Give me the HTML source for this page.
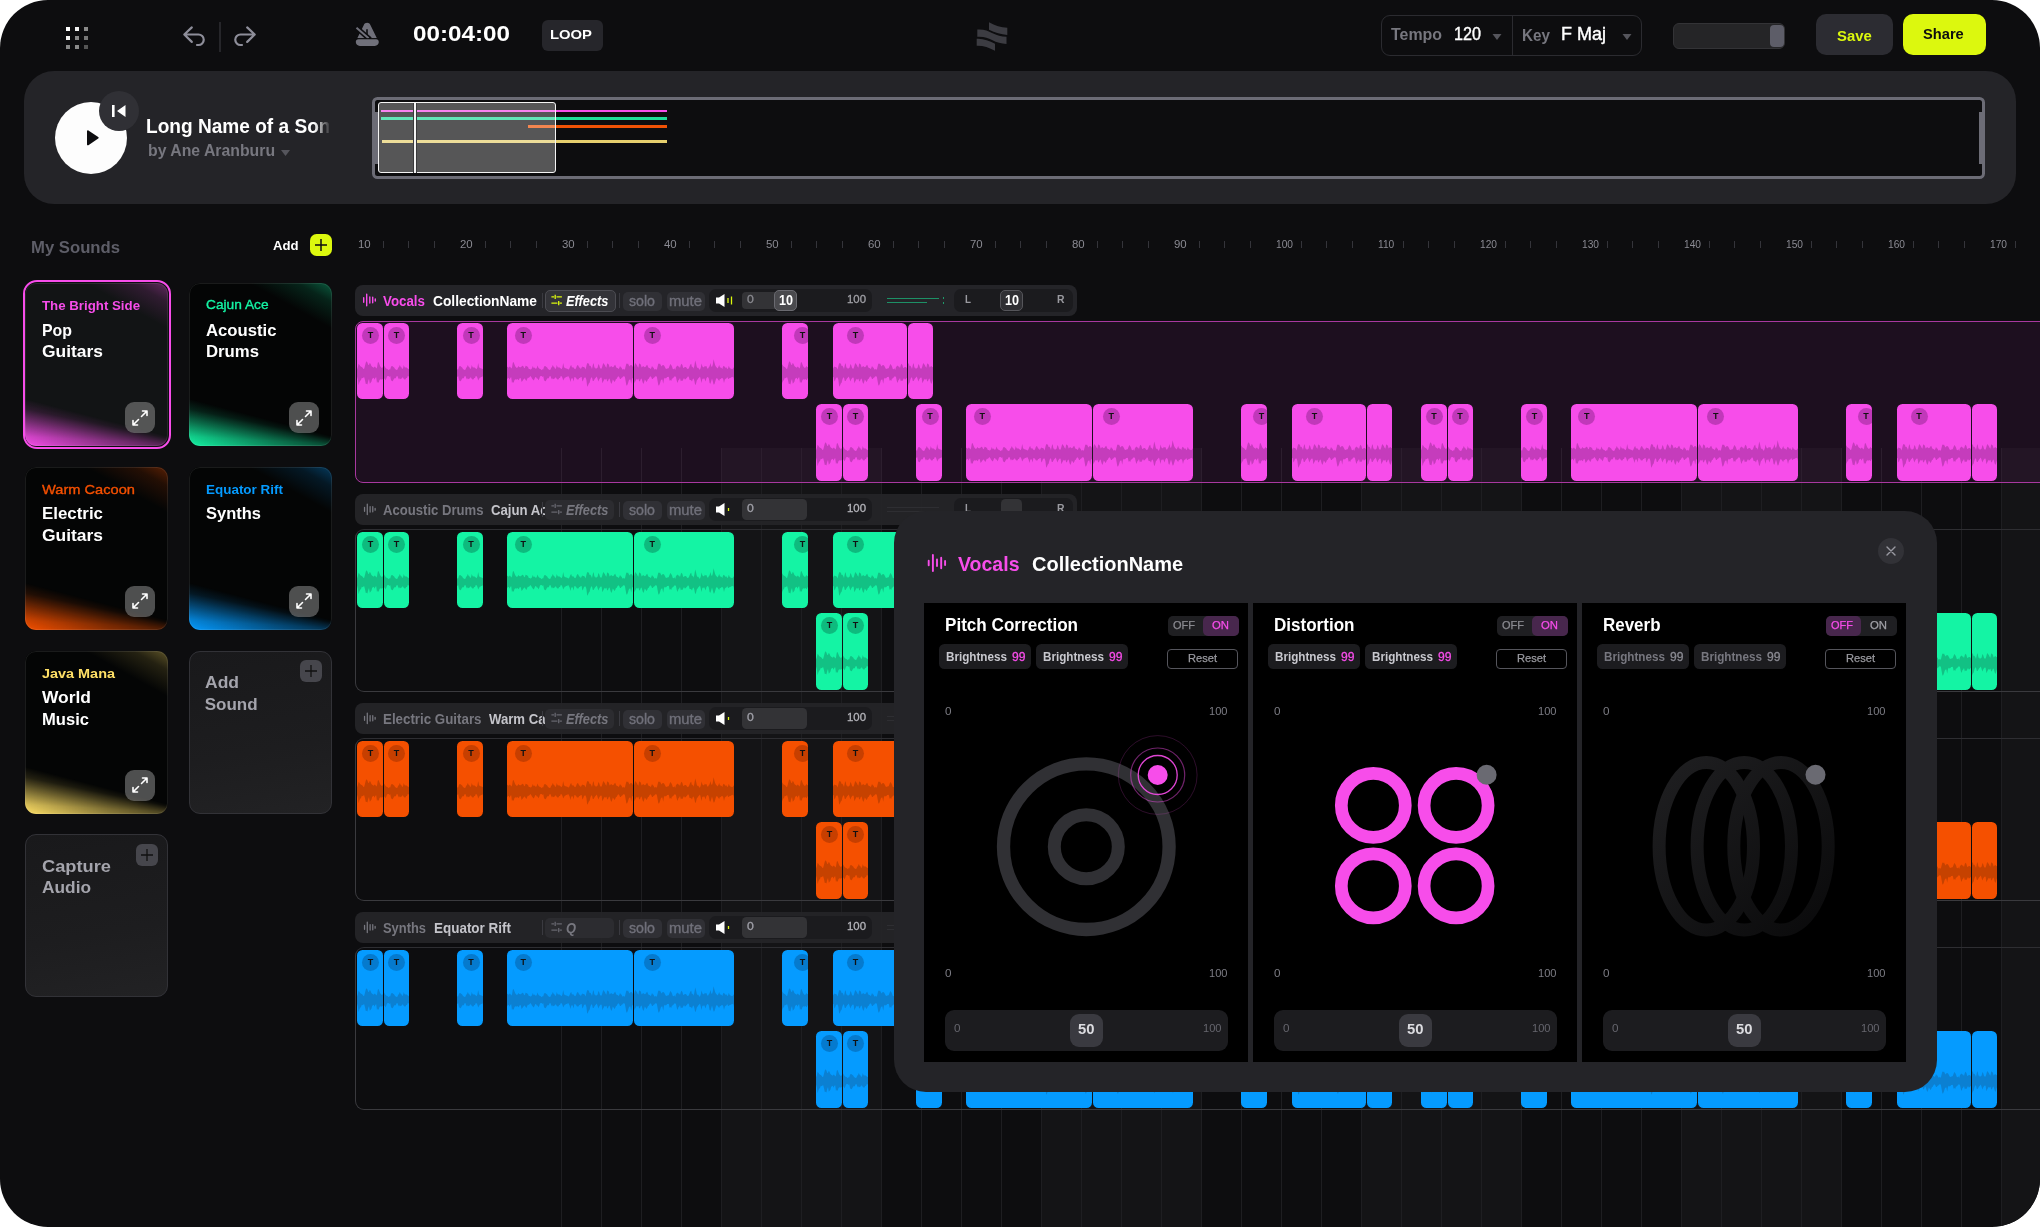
<!DOCTYPE html><html><head><meta charset="utf-8"><title>Studio</title><style>
*{margin:0;padding:0;box-sizing:border-box}
html,body{width:2040px;height:1227px;background:#fff;overflow:hidden}
body{font-family:"Liberation Sans",sans-serif;}
#app{position:absolute;left:0;top:0;width:2040px;height:1227px;background:#0d0d0f;border-radius:48px;overflow:hidden;will-change:transform}
.b{position:absolute}
.t{position:absolute;white-space:nowrap;line-height:1;transform-origin:0 50%}
.c{position:absolute;height:76.400px;border-radius:5.500px;overflow:hidden}
.w{position:absolute;left:0;top:30.200px;width:280px;height:40px}
.tb{position:absolute;top:4px;width:17px;height:17px;border-radius:50%;font-style:normal;font-weight:700;font-size:9px;line-height:17px;text-align:center;color:#111}
svg{position:absolute;overflow:visible}
</style></head><body><div id="app"><svg width="0" height="0" style="left:-10px"><defs><path id="wv" d="M0 0L0 -3.6L0.8 -5.8L1.6 -9.3L2.4 -8.3L3.2 -7.1L4 -6.3L4.8 -6.0L5.6 -5.3L6.4 -4.0L7.2 -4.2L8 -7.3L8.8 -10.6L9.6 -11.7L10.4 -10.4L11.2 -8.2L12 -8.0L12.8 -10.2L13.6 -9.0L14.4 -7.1L15.2 -6.2L16 -5.8L16.8 -5.2L17.6 -6.4L18.4 -5.9L19.2 -4.5L20 -5.5L20.8 -10.2L21.6 -11.0L22.4 -8.8L23.2 -6.8L24 -5.8L24.8 -4.9L25.6 -5.5L26.4 -7.1L27.2 -5.9L28 -5.8L28.8 -5.7L29.6 -6.6L30.4 -7.3L31.2 -6.9L32 -5.2L32.8 -4.7L33.6 -7.3L34.4 -7.1L35.2 -6.5L36 -6.0L36.8 -4.1L37.6 -4.0L38.4 -3.5L39.2 -3.7L40 -4.8L40.8 -7.1L41.6 -5.1L42.4 -5.5L43.2 -4.8L44 -4.0L44.8 -5.2L45.6 -7.4L46.4 -5.3L47.2 -4.5L48 -4.0L48.8 -3.8L49.6 -2.8L50.4 -3.8L51.2 -3.5L52 -6.2L52.8 -6.9L53.6 -6.7L54.4 -6.1L55.2 -5.4L56 -4.1L56.8 -3.4L57.6 -3.1L58.4 -3.3L59.2 -5.3L60 -6.0L60.8 -7.9L61.6 -6.2L62.4 -5.7L63.2 -4.0L64 -4.8L64.8 -7.9L65.6 -5.7L66.4 -5.5L67.2 -5.7L68 -5.1L68.8 -4.4L69.6 -3.7L70.4 -5.4L71.2 -9.9L72 -5.9L72.8 -5.1L73.6 -4.8L74.4 -4.5L75.2 -4.2L76 -3.7L76.8 -3.6L77.6 -4.9L78.4 -7.1L79.2 -8.1L80 -5.5L80.8 -5.7L81.6 -5.6L82.4 -4.3L83.2 -3.8L84 -4.8L84.8 -6.9L85.6 -8.1L86.4 -7.3L87.2 -5.2L88 -5.4L88.8 -3.8L89.6 -5.6L90.4 -6.6L91.2 -5.9L92 -6.0L92.8 -5.3L93.6 -3.4L94.4 -7.1L95.2 -9.9L96 -9.4L96.8 -9.4L97.6 -7.1L98.4 -7.3L99.2 -6.1L100 -3.9L100.8 -8.0L101.6 -10.0L102.4 -5.5L103.2 -5.2L104 -4.0L104.8 -4.9L105.6 -5.3L106.4 -9.0L107.2 -7.8L108 -5.3L108.8 -4.2L109.6 -4.4L110.4 -6.9L111.2 -10.1L112 -9.1L112.8 -8.1L113.6 -6.2L114.4 -5.3L115.2 -9.7L116 -9.1L116.8 -8.4L117.6 -5.5L118.4 -6.3L119.2 -6.9L120 -6.3L120.8 -5.8L121.6 -6.2L122.4 -7.4L123.2 -8.2L124 -6.3L124.8 -5.1L125.6 -5.1L126.4 -3.9L127.2 -4.8L128 -6.9L128.8 -5.7L129.6 -5.2L130.4 -3.6L131.2 -3.6L132 -4.2L132.8 -3.1L133.6 -6.6L134.4 -9.6L135.2 -9.0L136 -9.5L136.8 -7.7L137.6 -6.5L138.4 -7.7L139.2 -8.0L140 -7.6L140.8 -6.3L141.6 -4.5L142.4 -4.1L143.2 -4.6L144 -4.6L144.8 -4.9L145.6 -7.2L146.4 -9.1L147.2 -8.0L148 -6.6L148.8 -4.1L149.6 -3.7L150.4 -4.7L151.2 -3.1L152 -5.9L152.8 -6.7L153.6 -7.5L154.4 -6.5L155.2 -6.3L156 -5.1L156.8 -7.9L157.6 -9.3L158.4 -8.1L159.2 -5.0L160 -5.2L160.8 -5.9L161.6 -5.9L162.4 -5.4L163.2 -4.1L164 -4.3L164.8 -4.5L165.6 -6.7L166.4 -8.5L167.2 -9.2L168 -5.6L168.8 -6.6L169.6 -4.3L170.4 -7.5L171.2 -12.5L172 -9.8L172.8 -6.2L173.6 -4.9L174.4 -5.2L175.2 -3.5L176 -3.6L176.8 -5.6L177.6 -9.4L178.4 -6.5L179.2 -6.1L180 -5.5L180.8 -7.3L181.6 -6.5L182.4 -6.9L183.2 -4.7L184 -4.3L184.8 -5.8L185.6 -6.7L186.4 -9.9L187.2 -6.8L188 -6.1L188.8 -8.5L189.6 -13.7L190.4 -10.6L191.2 -7.7L192 -6.3L192.8 -5.4L193.6 -4.4L194.4 -6.0L195.2 -7.9L196 -5.4L196.8 -5.5L197.6 -5.1L198.4 -4.0L199.2 -7.3L200 -6.5L200.8 -6.4L201.6 -5.1L202.4 -5.8L203.2 -4.1L204 -4.6L204.8 -7.3L205.6 -5.3L206.4 -4.6L207.2 -4.3L208 -3.8L208.8 -4.2L209.6 -5.2L210.4 -6.8L211.2 -8.4L212 -7.1L212.8 -7.6L213.6 -4.6L214.4 -6.9L215.2 -13.9L216 -10.6L216.8 -7.6L217.6 -9.0L218.4 -6.4L219.2 -5.2L220 -4.3L220.8 -7.3L221.6 -8.7L222.4 -7.7L223.2 -5.5L224 -4.6L224.8 -4.2L225.6 -5.5L226.4 -5.9L227.2 -5.3L228 -5.3L228.8 -3.4L229.6 -3.4L230.4 -4.6L231.2 -5.6L232 -7.3L232.8 -7.1L233.6 -5.5L234.4 -4.5L235.2 -4.7L236 -4.2L236.8 -3.6L237.6 -3.8L238.4 -4.7L239.2 -7.9L240 -7.8L240.8 -6.3L241.6 -4.7L242.4 -4.7L243.2 -5.7L244 -6.5L244.8 -10.4L245.6 -7.3L246.4 -6.6L247.2 -6.3L248 -4.5L248.8 -8.0L249.6 -9.9L250.4 -5.5L251.2 -5.8L252 -4.2L252.8 -4.3L253.6 -4.8L254.4 -7.2L255.2 -5.7L256 -4.9L256.8 -3.9L257.6 -3.9L258.4 -2.8L259.2 -3.8L260 -6.5L260.8 -10.7L261.6 -9.4L262.4 -8.0L263.2 -7.5L264 -7.4L264.8 -4.8L265.6 -5.5L266.4 -5.6L267.2 -9.4L268 -11.1L268.8 -7.6L269.6 -6.6L270.4 -6.7L271.2 -10.6L272 -9.1L272.8 -6.9L273.6 -6.8L274.4 -5.2L275.2 -4.3L276 -4.1L276.8 -5.9L277.6 -7.4L278.4 -12.4L279.2 -8.1L279.2 0L279.2 9.2L278.4 11.5L277.6 9.8L276.8 6.1L276 3.4L275.2 4.6L274.4 5.2L273.6 6.4L272.8 6.9L272 7.9L271.2 8.7L270.4 7.2L269.6 6.8L268.8 6.8L268 8.3L267.2 10.8L266.4 9.1L265.6 4.6L264.8 6.7L264 6.2L263.2 7.2L262.4 7.6L261.6 13.3L260.8 11.9L260 6.1L259.2 3.5L258.4 2.9L257.6 3.7L256.8 5.1L256 4.9L255.2 6.7L254.4 6.5L253.6 4.1L252.8 4.5L252 3.7L251.2 5.1L250.4 6.5L249.6 9.3L248.8 5.7L248 5.6L247.2 5.8L246.4 7.7L245.6 7.7L244.8 8.9L244 7.1L243.2 4.5L242.4 4.6L241.6 5.5L240.8 6.2L240 7.5L239.2 8.0L238.4 6.9L237.6 4.3L236.8 3.8L236 3.2L235.2 4.6L234.4 5.2L233.6 4.9L232.8 6.9L232 7.9L231.2 6.6L230.4 4.6L229.6 3.5L228.8 4.4L228 5.2L227.2 5.3L226.4 6.5L225.6 4.6L224.8 3.5L224 4.9L223.2 5.3L222.4 6.1L221.6 10.2L220.8 7.2L220 4.5L219.2 5.5L218.4 8.1L217.6 8.8L216.8 8.6L216 9.4L215.2 13.4L214.4 9.1L213.6 4.2L212.8 7.7L212 6.1L211.2 8.2L210.4 9.9L209.6 4.7L208.8 3.7L208 4.3L207.2 4.2L206.4 5.1L205.6 5.0L204.8 5.9L204 5.7L203.2 4.1L202.4 5.5L201.6 5.8L200.8 6.8L200 10.1L199.2 6.3L198.4 4.9L197.6 5.0L196.8 6.3L196 5.7L195.2 7.9L194.4 7.0L193.6 5.7L192.8 5.1L192 6.0L191.2 8.8L190.4 11.2L189.6 11.5L188.8 8.2L188 5.4L187.2 8.3L186.4 10.7L185.6 9.9L184.8 5.5L184 4.1L183.2 4.3L182.4 5.2L181.6 8.4L180.8 6.5L180 4.9L179.2 6.3L178.4 5.4L177.6 9.9L176.8 6.7L176 3.6L175.2 4.5L174.4 5.3L173.6 6.4L172.8 7.6L172 10.7L171.2 12.2L170.4 8.1L169.6 5.6L168.8 6.0L168 8.4L167.2 7.3L166.4 7.1L165.6 7.0L164.8 4.0L164 3.3L163.2 4.6L162.4 5.2L161.6 6.2L160.8 6.4L160 5.0L159.2 6.4L158.4 8.1L157.6 7.4L156.8 8.2L156 5.1L155.2 6.5L154.4 7.3L153.6 9.9L152.8 7.9L152 4.2L151.2 3.2L150.4 3.4L149.6 4.6L148.8 5.4L148 5.5L147.2 7.9L146.4 7.1L145.6 7.7L144.8 3.7L144 4.1L143.2 3.9L142.4 4.9L141.6 5.6L140.8 4.7L140 5.9L139.2 10.8L138.4 6.4L137.6 6.4L136.8 7.6L136 10.2L135.2 12.2L134.4 12.4L133.6 7.9L132.8 3.5L132 3.4L131.2 3.2L130.4 4.4L129.6 4.7L128.8 6.0L128 6.0L127.2 4.1L126.4 3.2L125.6 4.0L124.8 5.7L124 6.0L123.2 7.9L122.4 9.0L121.6 7.6L120.8 6.6L120 9.4L119.2 11.0L118.4 8.4L117.6 5.4L116.8 6.1L116 8.1L115.2 8.4L114.4 5.6L113.6 6.8L112.8 5.8L112 7.0L111.2 8.5L110.4 10.3L109.6 4.7L108.8 4.5L108 5.3L107.2 6.4L106.4 8.4L105.6 6.0L104.8 3.5L104 4.5L103.2 5.3L102.4 6.5L101.6 8.1L100.8 8.0L100 4.5L99.2 4.4L98.4 6.5L97.6 9.8L96.8 10.6L96 12.5L95.2 13.7L94.4 6.9L93.6 4.5L92.8 4.4L92 4.9L91.2 7.3L90.4 8.4L89.6 4.0L88.8 4.1L88 5.0L87.2 5.0L86.4 6.5L85.6 6.5L84.8 6.3L84 4.7L83.2 4.3L82.4 4.1L81.6 8.5L80.8 5.7L80 4.9L79.2 6.1L78.4 9.0L77.6 5.5L76.8 4.0L76 2.8L75.2 4.3L74.4 3.8L73.6 4.5L72.8 4.8L72 5.9L71.2 7.4L70.4 4.7L69.6 3.3L68.8 3.1L68 5.1L67.2 5.1L66.4 6.4L65.6 6.4L64.8 6.0L64 4.5L63.2 4.5L62.4 5.8L61.6 6.2L60.8 5.3L60 6.5L59.2 4.9L58.4 3.1L57.6 3.2L56.8 4.9L56 5.5L55.2 5.2L54.4 7.1L53.6 8.2L52.8 8.1L52 7.1L51.2 2.9L50.4 3.9L49.6 3.0L48.8 3.1L48 3.5L47.2 6.1L46.4 7.2L45.6 5.6L44.8 5.4L44 4.1L43.2 4.2L42.4 6.3L41.6 7.5L40.8 6.6L40 5.6L39.2 3.9L38.4 3.1L37.6 3.9L36.8 5.0L36 4.5L35.2 6.1L34.4 8.1L33.6 6.9L32.8 5.5L32 5.8L31.2 7.0L30.4 7.9L29.6 8.9L28.8 5.6L28 4.7L27.2 6.2L26.4 7.3L25.6 5.9L24.8 6.6L24 6.6L23.2 6.2L22.4 7.3L21.6 10.0L20.8 8.5L20 10.3L19.2 4.2L18.4 4.8L17.6 6.7L16.8 4.7L16 5.2L15.2 5.8L14.4 8.8L13.6 9.8L12.8 10.8L12 6.1L11.2 8.1L10.4 11.5L9.6 10.7L8.8 11.0L8 7.2L7.2 4.3L6.4 4.5L5.6 5.2L4.8 4.8L4 6.9L3.2 7.8L2.4 9.2L1.6 12.3L0.8 6.3L0 3.5Z"/></defs></svg><div class="b" style="left:721.0px;top:448.0px;width:40.0px;height:800.0px;background:#141416;"></div><div class="b" style="left:761.0px;top:448.0px;width:40.0px;height:800.0px;background:#141416;"></div><div class="b" style="left:801.0px;top:448.0px;width:40.0px;height:800.0px;background:#141416;"></div><div class="b" style="left:841.0px;top:448.0px;width:40.0px;height:800.0px;background:#141416;"></div><div class="b" style="left:1041.0px;top:448.0px;width:40.0px;height:800.0px;background:#141416;"></div><div class="b" style="left:1081.0px;top:448.0px;width:40.0px;height:800.0px;background:#141416;"></div><div class="b" style="left:1121.0px;top:448.0px;width:40.0px;height:800.0px;background:#141416;"></div><div class="b" style="left:1161.0px;top:448.0px;width:40.0px;height:800.0px;background:#141416;"></div><div class="b" style="left:1361.0px;top:448.0px;width:40.0px;height:800.0px;background:#141416;"></div><div class="b" style="left:1401.0px;top:448.0px;width:40.0px;height:800.0px;background:#141416;"></div><div class="b" style="left:1441.0px;top:448.0px;width:40.0px;height:800.0px;background:#141416;"></div><div class="b" style="left:1481.0px;top:448.0px;width:40.0px;height:800.0px;background:#141416;"></div><div class="b" style="left:1681.0px;top:448.0px;width:40.0px;height:800.0px;background:#141416;"></div><div class="b" style="left:1721.0px;top:448.0px;width:40.0px;height:800.0px;background:#141416;"></div><div class="b" style="left:1761.0px;top:448.0px;width:40.0px;height:800.0px;background:#141416;"></div><div class="b" style="left:1801.0px;top:448.0px;width:40.0px;height:800.0px;background:#141416;"></div><div class="b" style="left:2001.0px;top:448.0px;width:40.0px;height:800.0px;background:#141416;"></div><div class="b" style="left:2041.0px;top:448.0px;width:40.0px;height:800.0px;background:#141416;"></div><div class="b" style="left:561.0px;top:448.0px;width:1.0px;height:800.0px;background:#1e1e21;"></div><div class="b" style="left:601.0px;top:448.0px;width:1.0px;height:800.0px;background:#1e1e21;"></div><div class="b" style="left:641.0px;top:448.0px;width:1.0px;height:800.0px;background:#1e1e21;"></div><div class="b" style="left:681.0px;top:448.0px;width:1.0px;height:800.0px;background:#1e1e21;"></div><div class="b" style="left:721.0px;top:448.0px;width:1.0px;height:800.0px;background:#1e1e21;"></div><div class="b" style="left:761.0px;top:448.0px;width:1.0px;height:800.0px;background:#1e1e21;"></div><div class="b" style="left:801.0px;top:448.0px;width:1.0px;height:800.0px;background:#1e1e21;"></div><div class="b" style="left:841.0px;top:448.0px;width:1.0px;height:800.0px;background:#1e1e21;"></div><div class="b" style="left:881.0px;top:448.0px;width:1.0px;height:800.0px;background:#1e1e21;"></div><div class="b" style="left:921.0px;top:448.0px;width:1.0px;height:800.0px;background:#1e1e21;"></div><div class="b" style="left:961.0px;top:448.0px;width:1.0px;height:800.0px;background:#1e1e21;"></div><div class="b" style="left:1001.0px;top:448.0px;width:1.0px;height:800.0px;background:#1e1e21;"></div><div class="b" style="left:1041.0px;top:448.0px;width:1.0px;height:800.0px;background:#1e1e21;"></div><div class="b" style="left:1081.0px;top:448.0px;width:1.0px;height:800.0px;background:#1e1e21;"></div><div class="b" style="left:1121.0px;top:448.0px;width:1.0px;height:800.0px;background:#1e1e21;"></div><div class="b" style="left:1161.0px;top:448.0px;width:1.0px;height:800.0px;background:#1e1e21;"></div><div class="b" style="left:1201.0px;top:448.0px;width:1.0px;height:800.0px;background:#1e1e21;"></div><div class="b" style="left:1241.0px;top:448.0px;width:1.0px;height:800.0px;background:#1e1e21;"></div><div class="b" style="left:1281.0px;top:448.0px;width:1.0px;height:800.0px;background:#1e1e21;"></div><div class="b" style="left:1321.0px;top:448.0px;width:1.0px;height:800.0px;background:#1e1e21;"></div><div class="b" style="left:1361.0px;top:448.0px;width:1.0px;height:800.0px;background:#1e1e21;"></div><div class="b" style="left:1401.0px;top:448.0px;width:1.0px;height:800.0px;background:#1e1e21;"></div><div class="b" style="left:1441.0px;top:448.0px;width:1.0px;height:800.0px;background:#1e1e21;"></div><div class="b" style="left:1481.0px;top:448.0px;width:1.0px;height:800.0px;background:#1e1e21;"></div><div class="b" style="left:1521.0px;top:448.0px;width:1.0px;height:800.0px;background:#1e1e21;"></div><div class="b" style="left:1561.0px;top:448.0px;width:1.0px;height:800.0px;background:#1e1e21;"></div><div class="b" style="left:1601.0px;top:448.0px;width:1.0px;height:800.0px;background:#1e1e21;"></div><div class="b" style="left:1641.0px;top:448.0px;width:1.0px;height:800.0px;background:#1e1e21;"></div><div class="b" style="left:1681.0px;top:448.0px;width:1.0px;height:800.0px;background:#1e1e21;"></div><div class="b" style="left:1721.0px;top:448.0px;width:1.0px;height:800.0px;background:#1e1e21;"></div><div class="b" style="left:1761.0px;top:448.0px;width:1.0px;height:800.0px;background:#1e1e21;"></div><div class="b" style="left:1801.0px;top:448.0px;width:1.0px;height:800.0px;background:#1e1e21;"></div><div class="b" style="left:1841.0px;top:448.0px;width:1.0px;height:800.0px;background:#1e1e21;"></div><div class="b" style="left:1881.0px;top:448.0px;width:1.0px;height:800.0px;background:#1e1e21;"></div><div class="b" style="left:1921.0px;top:448.0px;width:1.0px;height:800.0px;background:#1e1e21;"></div><div class="b" style="left:1961.0px;top:448.0px;width:1.0px;height:800.0px;background:#1e1e21;"></div><div class="b" style="left:2001.0px;top:448.0px;width:1.0px;height:800.0px;background:#1e1e21;"></div><div class="b" style="left:2041.0px;top:448.0px;width:1.0px;height:800.0px;background:#1e1e21;"></div><div class="b" style="left:66.0px;top:26.8px;width:4.0px;height:4.0px;background:#fff;"></div><div class="b" style="left:75.0px;top:26.8px;width:4.0px;height:4.0px;background:#f2f2f2;"></div><div class="b" style="left:84.0px;top:26.8px;width:4.0px;height:4.0px;background:#8a8a8a;"></div><div class="b" style="left:66.0px;top:35.8px;width:4.0px;height:4.0px;background:#f2f2f2;"></div><div class="b" style="left:75.0px;top:35.8px;width:4.0px;height:4.0px;background:#8a8a8a;"></div><div class="b" style="left:84.0px;top:35.8px;width:4.0px;height:4.0px;background:#777;"></div><div class="b" style="left:66.0px;top:44.8px;width:4.0px;height:4.0px;background:#8a8a8a;"></div><div class="b" style="left:75.0px;top:44.8px;width:4.0px;height:4.0px;background:#8a8a8a;"></div><div class="b" style="left:84.0px;top:44.8px;width:4.0px;height:4.0px;background:#555;"></div><svg style="left:180px;top:22px" width="80" height="30" viewBox="180 22 80 30" fill="none" stroke="#8e8e9a" stroke-width="2.200" stroke-linecap="round" stroke-linejoin="round"><path d="M191.800 27.400L184.300 34.500l7.500 7.400M184.800 34.500H198.500a5.250 5.250 0 0 1 0 10.500h-1.500"/><path d="M247.200 27.400L254.700 34.500l-7.500 7.400M254.200 34.500H240.500a5.250 5.250 0 0 0 0 10.500h1.500"/></svg><div class="b" style="left:219.0px;top:21.5px;width:2.0px;height:30.5px;background:#26262a;"></div><svg style="left:350px;top:18px" width="36" height="32" viewBox="350 18 36 32"><path fill="#70707a" d="M357.300 38.200L363.700 25.200C365 22 369.200 22 370.500 25.200L376.900 38.200Z"/><path stroke="#0d0d0f" stroke-width="1.600" d="M367 29.300V36"/><path stroke="#0d0d0f" stroke-width="5" d="M355 26.300L370 39.500"/><path stroke="#70707a" stroke-width="2" d="M356.500 27.700L368.600 38.300"/><path fill="#0d0d0f" d="M354 38.200h26v3h-26z"/><path fill="#70707a" d="M358.500 39.200h17.600c1.800 0 2.700 1.200 2.700 2.800 0 2.200-1.800 3.900-4 3.900h-15c-2.200 0-4-1.700-4-3.900 0-1.600 .9-2.800 2.700-2.800z"/></svg><span class="t" style="left:413.0px;top:23.3px;font-size:22.5px;color:#fff;transform:scaleX(1.077);font-weight:700;">00:04:00</span><div class="b" style="left:542.0px;top:20.0px;width:61.0px;height:30.5px;background:#26262b;border-radius:6px;"></div><span class="t" style="left:550.0px;top:29.4px;font-size:12.5px;color:#fff;transform:scaleX(1.186);font-weight:700;">LOOP</span><svg style="left:970px;top:18px" width="44" height="36" viewBox="970 18 44 36" fill="#3c3c42"><path d="M989 22.200C995 25.500 1001 27.500 1007.300 27.800V34.900C1001 34.500 995 32.500 989 29.800Z"/><path d="M977.300 29.500C984 29 988 31 992 33C997 35.500 1001 36.500 1006.500 36.800V44C1001 43.700 997 42.500 992 40C988 38 984 36.300 977.300 36.700Z"/><path d="M976.700 38.700C983 38.300 989 40.500 995 43.800V50.700C989 47.500 983 45.500 976.700 45.700Z"/></svg><div class="b" style="left:1381.0px;top:15.0px;width:261.0px;height:41.0px;border-radius:9px;border:1px solid #2b2b30;"></div><div class="b" style="left:1511.5px;top:15.0px;width:1.0px;height:41.0px;background:#2b2b30;"></div><span class="t" style="left:1391.0px;top:26.0px;font-size:16.5px;color:#77777f;transform:scaleX(0.965);font-weight:700;">Tempo</span><span class="t" style="left:1454.0px;top:26.4px;font-size:17.8px;color:#fff;transform:scaleX(0.910);-webkit-text-stroke:0.400px #fff;">120</span><span class="t" style="left:1522.0px;top:27.0px;font-size:16.5px;color:#77777f;transform:scaleX(0.925);font-weight:700;">Key</span><span class="t" style="left:1561.0px;top:26.4px;font-size:17.8px;color:#fff;transform:scaleX(1.012);-webkit-text-stroke:0.400px #fff;">F Maj</span><svg style="left:1492px;top:33.800px" width="10" height="6" viewBox="0 0 10 6"><path fill="#55555c" d="M0.500 0h9L5 6z"/></svg><svg style="left:1622px;top:33.800px" width="10" height="6" viewBox="0 0 10 6"><path fill="#55555c" d="M0.500 0h9L5 6z"/></svg><div class="b" style="left:1672.5px;top:23.0px;width:112.5px;height:25.5px;background:#252527;border-radius:6px;border:1px solid #333336;"></div><div class="b" style="left:1769.5px;top:25.0px;width:14.0px;height:21.5px;background:#5d5d68;border-radius:4px;"></div><div class="b" style="left:1815.5px;top:14.0px;width:77.0px;height:41.0px;background:#2c2c32;border-radius:10px;"></div><span class="t" style="left:1836.7px;top:27.7px;font-size:15px;color:#dcf80e;transform:scaleX(0.990);font-weight:700;">Save</span><div class="b" style="left:1902.5px;top:14.0px;width:83.0px;height:41.0px;background:#dcf80e;border-radius:10px;"></div><span class="t" style="left:1923.3px;top:25.5px;font-size:15px;color:#0d0d0f;transform:scaleX(0.978);font-weight:700;">Share</span><div class="b" style="left:24.0px;top:71.0px;width:1992.0px;height:133.0px;background:#242428;border-radius:30px;"></div><div class="b" style="left:54.5px;top:101.5px;width:72.0px;height:72.0px;background:#fdfdfd;border-radius:36px;"></div><svg style="left:86px;top:129.500px" width="13" height="16" viewBox="0 0 13 16"><path fill="#0d0d0f" d="M1 1.200c0-.8.700-1.200 1.400-.8l9.800 6.600c.6.400.6 1.200 0 1.600l-9.800 6.600c-.7.400-1.400 0-1.400-.8z"/></svg><div class="b" style="left:98.5px;top:90.5px;width:40.5px;height:40.5px;background:#303035;border-radius:21px;"></div><svg style="left:112px;top:105px" width="14" height="12" viewBox="0 0 14 12"><path fill="#fff" d="M0 0h2.600v12H0zM13.500 0v12L5 6z"/></svg><div class="b" style="left:146px;top:110px;width:183px;height:34px;overflow:hidden;-webkit-mask-image:linear-gradient(90deg,#000 92%,transparent 101%);mask-image:linear-gradient(90deg,#000 92%,transparent 101%)"><span class="t" style="left:0.1px;top:6.1px;font-size:20px;color:#fff;transform:scaleX(0.954);font-weight:700;">Long Name of a Song</span></div><span class="t" style="left:147.5px;top:142.0px;font-size:16.5px;color:#77777f;transform:scaleX(0.958);font-weight:700;">by Ane Aranburu</span><svg style="left:280.500px;top:149.500px" width="9" height="6" viewBox="0 0 9 6"><path fill="#55555c" d="M0 0h9L4.500 6z"/></svg><div class="b" style="left:372.0px;top:96.5px;width:1613.3px;height:82.3px;background:#0d0d0f;border-radius:5.5px;border:3px solid #6c6c76;"></div><div class="b" style="left:1979.0px;top:112.0px;width:3.3px;height:52.0px;background:#6c6c76;"></div><div class="b" style="left:374.5px;top:112.0px;width:3.0px;height:52.0px;background:#6c6c76;"></div><div class="b" style="left:381.2px;top:109.5px;width:286.0px;height:2.7px;background:#f74dea;"></div><div class="b" style="left:381.2px;top:117.2px;width:286.0px;height:2.7px;background:#1fdc9a;"></div><div class="b" style="left:528.0px;top:125.2px;width:139.2px;height:2.7px;background:#ee5205;"></div><div class="b" style="left:382.2px;top:140.2px;width:285.0px;height:2.7px;background:#e6cf6e;"></div><div class="b" style="left:377.5px;top:101.7px;width:178.5px;height:71.7px;background:rgba(255,255,255,0.30);border-radius:3px;border:1.200px solid #f4f4f4;"></div><div class="b" style="left:413.4px;top:102.5px;width:3.3px;height:70.0px;background:#3a3a3c;"></div><div class="b" style="left:414.4px;top:102.5px;width:1.3px;height:70.0px;background:#f4f4f4;"></div><span class="t" style="left:30.7px;top:238.5px;font-size:17px;color:#5e5e68;transform:scaleX(0.982);font-weight:700;">My Sounds</span><span class="t" style="left:272.5px;top:239.0px;font-size:13.2px;color:#fff;transform:scaleX(0.995);font-weight:700;">Add</span><div class="b" style="left:309.9px;top:234.3px;width:21.8px;height:21.8px;background:#dcf80e;border-radius:6.5px;"></div><svg style="left:314.750px;top:239.250px" width="12" height="12" viewBox="0 0 12 12"><path stroke="#0d0d0f" stroke-width="1.500" d="M6 0v12M0 6h12"/></svg><div class="b" style="left:22.9px;top:280.1px;width:148.0px;height:168.7px;border-radius:14px;border:2px solid #f74dea;"></div><div class="b" style="left:25.4px;top:282.8px;width:143.0px;height:163.0px;border-radius:11px;background:linear-gradient(29deg,transparent 81%,rgba(247,77,234,0.13) 92%,rgba(247,77,234,0.36) 100%),#121415;overflow:hidden;"><div class="b" style="inset:0;background:conic-gradient(from 270deg at 127% 100%,rgba(247,77,234,1.00) 0deg,rgba(247,77,234,0.85) 3deg,rgba(247,77,234,0.42) 8deg,rgba(247,77,234,0.13) 11.500deg,transparent 14.700deg,transparent 360deg);-webkit-mask-image:linear-gradient(90deg,#000 0%,rgba(0,0,0,.55) 60%,rgba(0,0,0,.3) 100%);mask-image:linear-gradient(90deg,#000 0%,rgba(0,0,0,.55) 60%,rgba(0,0,0,.3) 100%)"></div><div class="b" style="inset:0;border-radius:11px;border:1px solid rgba(255,255,255,0.09)"></div></div><span class="t" style="left:41.9px;top:299.2px;font-size:13.2px;color:#f74dea;transform:scaleX(1.006);font-weight:700;">The Bright Side</span><span class="t" style="left:41.9px;top:321.5px;font-size:17px;color:#fff;transform:scaleX(0.934);font-weight:700;">Pop</span><span class="t" style="left:41.9px;top:343.4px;font-size:17px;color:#fff;transform:scaleX(1.025);font-weight:700;">Guitars</span><div class="b" style="left:124.9px;top:402.3px;width:30.5px;height:30.5px;background:rgba(128,128,128,0.6);border-radius:9px;"></div><svg style="left:132.1px;top:409.5px" width="16" height="16" viewBox="0 0 16 16" fill="none" stroke="#fff" stroke-width="1.600" stroke-linecap="round" stroke-linejoin="round"><path d="M9.500 6.500L15 1M10.500 1H15v4.500M6.500 9.500L1 15M1 10.500V15h4.500"/></svg><div class="b" style="left:189.0px;top:282.8px;width:143.0px;height:163.0px;border-radius:11px;background:linear-gradient(29deg,transparent 81%,rgba(20,244,164,0.13) 92%,rgba(20,244,164,0.36) 100%),#040505;overflow:hidden;"><div class="b" style="inset:0;background:conic-gradient(from 270deg at 127% 100%,rgba(20,244,164,1.00) 0deg,rgba(20,244,164,0.85) 3deg,rgba(20,244,164,0.42) 8deg,rgba(20,244,164,0.13) 11.500deg,transparent 14.700deg,transparent 360deg);-webkit-mask-image:linear-gradient(90deg,#000 0%,rgba(0,0,0,.55) 60%,rgba(0,0,0,.3) 100%);mask-image:linear-gradient(90deg,#000 0%,rgba(0,0,0,.55) 60%,rgba(0,0,0,.3) 100%)"></div><div class="b" style="inset:0;border-radius:11px;border:1px solid rgba(255,255,255,0.09)"></div></div><span class="t" style="left:205.5px;top:297.7px;font-size:13.2px;color:#14f4a4;transform:scaleX(1.040);-webkit-text-stroke:0.350px #14f4a4;">Cajun Ace</span><span class="t" style="left:205.5px;top:321.5px;font-size:17px;color:#fff;transform:scaleX(0.982);font-weight:700;">Acoustic</span><span class="t" style="left:205.5px;top:343.4px;font-size:17px;color:#fff;transform:scaleX(0.984);font-weight:700;">Drums</span><div class="b" style="left:288.5px;top:402.3px;width:30.5px;height:30.5px;background:rgba(128,128,128,0.6);border-radius:9px;"></div><svg style="left:295.7px;top:409.5px" width="16" height="16" viewBox="0 0 16 16" fill="none" stroke="#fff" stroke-width="1.600" stroke-linecap="round" stroke-linejoin="round"><path d="M9.500 6.500L15 1M10.500 1H15v4.500M6.500 9.500L1 15M1 10.500V15h4.500"/></svg><div class="b" style="left:25.4px;top:466.7px;width:143.0px;height:163.0px;border-radius:11px;background:linear-gradient(29deg,transparent 81%,rgba(245,80,0,0.13) 92%,rgba(245,80,0,0.36) 100%),#040505;overflow:hidden;"><div class="b" style="inset:0;background:conic-gradient(from 270deg at 127% 100%,rgba(245,80,0,1.00) 0deg,rgba(245,80,0,0.85) 3deg,rgba(245,80,0,0.42) 8deg,rgba(245,80,0,0.13) 11.500deg,transparent 14.700deg,transparent 360deg);-webkit-mask-image:linear-gradient(90deg,#000 0%,rgba(0,0,0,.55) 60%,rgba(0,0,0,.3) 100%);mask-image:linear-gradient(90deg,#000 0%,rgba(0,0,0,.55) 60%,rgba(0,0,0,.3) 100%)"></div><div class="b" style="inset:0;border-radius:11px;border:1px solid rgba(255,255,255,0.09)"></div></div><span class="t" style="left:41.9px;top:483.1px;font-size:13.2px;color:#f55000;transform:scaleX(1.110);-webkit-text-stroke:0.350px #f55000;">Warm Cacoon</span><span class="t" style="left:41.9px;top:505.4px;font-size:17px;color:#fff;transform:scaleX(0.993);font-weight:700;">Electric</span><span class="t" style="left:41.9px;top:527.3px;font-size:17px;color:#fff;transform:scaleX(1.025);font-weight:700;">Guitars</span><div class="b" style="left:124.9px;top:586.2px;width:30.5px;height:30.5px;background:rgba(128,128,128,0.6);border-radius:9px;"></div><svg style="left:132.1px;top:593.4px" width="16" height="16" viewBox="0 0 16 16" fill="none" stroke="#fff" stroke-width="1.600" stroke-linecap="round" stroke-linejoin="round"><path d="M9.500 6.500L15 1M10.500 1H15v4.500M6.500 9.500L1 15M1 10.500V15h4.500"/></svg><div class="b" style="left:189.0px;top:466.7px;width:143.0px;height:163.0px;border-radius:11px;background:linear-gradient(29deg,transparent 81%,rgba(5,155,255,0.13) 92%,rgba(5,155,255,0.36) 100%),#040505;overflow:hidden;"><div class="b" style="inset:0;background:conic-gradient(from 270deg at 127% 100%,rgba(5,155,255,1.00) 0deg,rgba(5,155,255,0.85) 3deg,rgba(5,155,255,0.42) 8deg,rgba(5,155,255,0.13) 11.500deg,transparent 14.700deg,transparent 360deg);-webkit-mask-image:linear-gradient(90deg,#000 0%,rgba(0,0,0,.55) 60%,rgba(0,0,0,.3) 100%);mask-image:linear-gradient(90deg,#000 0%,rgba(0,0,0,.55) 60%,rgba(0,0,0,.3) 100%)"></div><div class="b" style="inset:0;border-radius:11px;border:1px solid rgba(255,255,255,0.09)"></div></div><span class="t" style="left:205.5px;top:483.1px;font-size:13.2px;color:#059bff;transform:scaleX(1.020);font-weight:700;">Equator Rift</span><span class="t" style="left:205.5px;top:505.4px;font-size:17px;color:#fff;transform:scaleX(0.970);font-weight:700;">Synths</span><div class="b" style="left:288.5px;top:586.2px;width:30.5px;height:30.5px;background:rgba(128,128,128,0.6);border-radius:9px;"></div><svg style="left:295.7px;top:593.4px" width="16" height="16" viewBox="0 0 16 16" fill="none" stroke="#fff" stroke-width="1.600" stroke-linecap="round" stroke-linejoin="round"><path d="M9.500 6.500L15 1M10.500 1H15v4.500M6.500 9.500L1 15M1 10.500V15h4.500"/></svg><div class="b" style="left:25.4px;top:650.5px;width:143.0px;height:163.0px;border-radius:11px;background:linear-gradient(29deg,transparent 81%,rgba(255,224,102,0.13) 92%,rgba(255,224,102,0.36) 100%),#040505;overflow:hidden;"><div class="b" style="inset:0;background:conic-gradient(from 270deg at 127% 100%,rgba(255,224,102,1.00) 0deg,rgba(255,224,102,0.85) 3deg,rgba(255,224,102,0.42) 8deg,rgba(255,224,102,0.13) 11.500deg,transparent 14.700deg,transparent 360deg);-webkit-mask-image:linear-gradient(90deg,#000 0%,rgba(0,0,0,.55) 60%,rgba(0,0,0,.3) 100%);mask-image:linear-gradient(90deg,#000 0%,rgba(0,0,0,.55) 60%,rgba(0,0,0,.3) 100%)"></div><div class="b" style="inset:0;border-radius:11px;border:1px solid rgba(255,255,255,0.09)"></div></div><span class="t" style="left:41.9px;top:666.9px;font-size:13.2px;color:#ffe066;transform:scaleX(1.094);font-weight:700;">Java Mana</span><span class="t" style="left:41.9px;top:689.2px;font-size:17px;color:#fff;transform:scaleX(1.024);font-weight:700;">World</span><span class="t" style="left:41.9px;top:711.1px;font-size:17px;color:#fff;transform:scaleX(0.975);font-weight:700;">Music</span><div class="b" style="left:124.9px;top:770.0px;width:30.5px;height:30.5px;background:rgba(128,128,128,0.6);border-radius:9px;"></div><svg style="left:132.1px;top:777.2px" width="16" height="16" viewBox="0 0 16 16" fill="none" stroke="#fff" stroke-width="1.600" stroke-linecap="round" stroke-linejoin="round"><path d="M9.500 6.500L15 1M10.500 1H15v4.500M6.500 9.500L1 15M1 10.500V15h4.500"/></svg><div class="b" style="left:189.0px;top:650.5px;width:143.0px;height:163.0px;border-radius:11px;background:linear-gradient(170deg,#19191b 0%,#1d1d1f 60%,#222224 100%);border:1px solid #323237;"></div><span class="t" style="left:204.7px;top:673.7px;font-size:17px;color:#a4a4ac;transform:scaleX(1.029);font-weight:700;">Add</span><span class="t" style="left:204.7px;top:695.5px;font-size:17px;color:#a4a4ac;font-weight:700;">Sound</span><div class="b" style="left:299.5px;top:660.0px;width:22.0px;height:22.0px;background:#46464c;border-radius:6px;"></div><svg style="left:304.5px;top:665.0px" width="12" height="12" viewBox="0 0 12 12"><path stroke="#111" stroke-width="1.300" d="M6 0v12M0 6h12"/></svg><div class="b" style="left:25.4px;top:834.3px;width:143.0px;height:163.0px;border-radius:11px;background:linear-gradient(170deg,#19191b 0%,#1d1d1f 60%,#222224 100%);border:1px solid #323237;"></div><span class="t" style="left:42.1px;top:857.5px;font-size:17px;color:#a4a4ac;transform:scaleX(1.074);font-weight:700;">Capture</span><span class="t" style="left:42.1px;top:879.3px;font-size:17px;color:#a4a4ac;transform:scaleX(1.018);font-weight:700;">Audio</span><div class="b" style="left:135.9px;top:843.8px;width:22.0px;height:22.0px;background:#46464c;border-radius:6px;"></div><svg style="left:140.9px;top:848.8px" width="12" height="12" viewBox="0 0 12 12"><path stroke="#111" stroke-width="1.300" d="M6 0v12M0 6h12"/></svg><span class="t" style="left:357.5px;top:238.6px;font-size:11.5px;color:#8a8a92;transform:scaleX(0.992);">10</span><div class="b" style="left:382.7px;top:241.0px;width:1.0px;height:7.3px;background:#34343a;"></div><div class="b" style="left:408.2px;top:241.0px;width:1.0px;height:7.3px;background:#34343a;"></div><div class="b" style="left:433.7px;top:241.0px;width:1.0px;height:7.3px;background:#34343a;"></div><span class="t" style="left:459.5px;top:238.6px;font-size:11.5px;color:#8a8a92;transform:scaleX(0.992);">20</span><div class="b" style="left:484.7px;top:241.0px;width:1.0px;height:7.3px;background:#34343a;"></div><div class="b" style="left:510.2px;top:241.0px;width:1.0px;height:7.3px;background:#34343a;"></div><div class="b" style="left:535.7px;top:241.0px;width:1.0px;height:7.3px;background:#34343a;"></div><span class="t" style="left:561.5px;top:238.6px;font-size:11.5px;color:#8a8a92;transform:scaleX(0.992);">30</span><div class="b" style="left:586.7px;top:241.0px;width:1.0px;height:7.3px;background:#34343a;"></div><div class="b" style="left:612.2px;top:241.0px;width:1.0px;height:7.3px;background:#34343a;"></div><div class="b" style="left:637.7px;top:241.0px;width:1.0px;height:7.3px;background:#34343a;"></div><span class="t" style="left:663.5px;top:238.6px;font-size:11.5px;color:#8a8a92;transform:scaleX(0.992);">40</span><div class="b" style="left:688.7px;top:241.0px;width:1.0px;height:7.3px;background:#34343a;"></div><div class="b" style="left:714.2px;top:241.0px;width:1.0px;height:7.3px;background:#34343a;"></div><div class="b" style="left:739.7px;top:241.0px;width:1.0px;height:7.3px;background:#34343a;"></div><span class="t" style="left:765.5px;top:238.6px;font-size:11.5px;color:#8a8a92;transform:scaleX(0.992);">50</span><div class="b" style="left:790.7px;top:241.0px;width:1.0px;height:7.3px;background:#34343a;"></div><div class="b" style="left:816.2px;top:241.0px;width:1.0px;height:7.3px;background:#34343a;"></div><div class="b" style="left:841.7px;top:241.0px;width:1.0px;height:7.3px;background:#34343a;"></div><span class="t" style="left:867.5px;top:238.6px;font-size:11.5px;color:#8a8a92;transform:scaleX(0.992);">60</span><div class="b" style="left:892.7px;top:241.0px;width:1.0px;height:7.3px;background:#34343a;"></div><div class="b" style="left:918.2px;top:241.0px;width:1.0px;height:7.3px;background:#34343a;"></div><div class="b" style="left:943.7px;top:241.0px;width:1.0px;height:7.3px;background:#34343a;"></div><span class="t" style="left:969.5px;top:238.6px;font-size:11.5px;color:#8a8a92;transform:scaleX(0.992);">70</span><div class="b" style="left:994.7px;top:241.0px;width:1.0px;height:7.3px;background:#34343a;"></div><div class="b" style="left:1020.2px;top:241.0px;width:1.0px;height:7.3px;background:#34343a;"></div><div class="b" style="left:1045.7px;top:241.0px;width:1.0px;height:7.3px;background:#34343a;"></div><span class="t" style="left:1071.5px;top:238.6px;font-size:11.5px;color:#8a8a92;transform:scaleX(0.992);">80</span><div class="b" style="left:1096.7px;top:241.0px;width:1.0px;height:7.3px;background:#34343a;"></div><div class="b" style="left:1122.2px;top:241.0px;width:1.0px;height:7.3px;background:#34343a;"></div><div class="b" style="left:1147.7px;top:241.0px;width:1.0px;height:7.3px;background:#34343a;"></div><span class="t" style="left:1173.5px;top:238.6px;font-size:11.5px;color:#8a8a92;transform:scaleX(0.992);">90</span><div class="b" style="left:1198.7px;top:241.0px;width:1.0px;height:7.3px;background:#34343a;"></div><div class="b" style="left:1224.2px;top:241.0px;width:1.0px;height:7.3px;background:#34343a;"></div><div class="b" style="left:1249.7px;top:241.0px;width:1.0px;height:7.3px;background:#34343a;"></div><span class="t" style="left:1275.5px;top:238.6px;font-size:11.5px;color:#8a8a92;transform:scaleX(0.886);">100</span><div class="b" style="left:1300.7px;top:241.0px;width:1.0px;height:7.3px;background:#34343a;"></div><div class="b" style="left:1326.2px;top:241.0px;width:1.0px;height:7.3px;background:#34343a;"></div><div class="b" style="left:1351.7px;top:241.0px;width:1.0px;height:7.3px;background:#34343a;"></div><span class="t" style="left:1377.5px;top:238.6px;font-size:11.5px;color:#8a8a92;transform:scaleX(0.886);">110</span><div class="b" style="left:1402.7px;top:241.0px;width:1.0px;height:7.3px;background:#34343a;"></div><div class="b" style="left:1428.2px;top:241.0px;width:1.0px;height:7.3px;background:#34343a;"></div><div class="b" style="left:1453.7px;top:241.0px;width:1.0px;height:7.3px;background:#34343a;"></div><span class="t" style="left:1479.5px;top:238.6px;font-size:11.5px;color:#8a8a92;transform:scaleX(0.886);">120</span><div class="b" style="left:1504.7px;top:241.0px;width:1.0px;height:7.3px;background:#34343a;"></div><div class="b" style="left:1530.2px;top:241.0px;width:1.0px;height:7.3px;background:#34343a;"></div><div class="b" style="left:1555.7px;top:241.0px;width:1.0px;height:7.3px;background:#34343a;"></div><span class="t" style="left:1581.5px;top:238.6px;font-size:11.5px;color:#8a8a92;transform:scaleX(0.886);">130</span><div class="b" style="left:1606.7px;top:241.0px;width:1.0px;height:7.3px;background:#34343a;"></div><div class="b" style="left:1632.2px;top:241.0px;width:1.0px;height:7.3px;background:#34343a;"></div><div class="b" style="left:1657.7px;top:241.0px;width:1.0px;height:7.3px;background:#34343a;"></div><span class="t" style="left:1683.5px;top:238.6px;font-size:11.5px;color:#8a8a92;transform:scaleX(0.886);">140</span><div class="b" style="left:1708.7px;top:241.0px;width:1.0px;height:7.3px;background:#34343a;"></div><div class="b" style="left:1734.2px;top:241.0px;width:1.0px;height:7.3px;background:#34343a;"></div><div class="b" style="left:1759.7px;top:241.0px;width:1.0px;height:7.3px;background:#34343a;"></div><span class="t" style="left:1785.5px;top:238.6px;font-size:11.5px;color:#8a8a92;transform:scaleX(0.886);">150</span><div class="b" style="left:1810.7px;top:241.0px;width:1.0px;height:7.3px;background:#34343a;"></div><div class="b" style="left:1836.2px;top:241.0px;width:1.0px;height:7.3px;background:#34343a;"></div><div class="b" style="left:1861.7px;top:241.0px;width:1.0px;height:7.3px;background:#34343a;"></div><span class="t" style="left:1887.5px;top:238.6px;font-size:11.5px;color:#8a8a92;transform:scaleX(0.886);">160</span><div class="b" style="left:1912.7px;top:241.0px;width:1.0px;height:7.3px;background:#34343a;"></div><div class="b" style="left:1938.2px;top:241.0px;width:1.0px;height:7.3px;background:#34343a;"></div><div class="b" style="left:1963.7px;top:241.0px;width:1.0px;height:7.3px;background:#34343a;"></div><span class="t" style="left:1989.5px;top:238.6px;font-size:11.5px;color:#8a8a92;transform:scaleX(0.886);">170</span><div class="b" style="left:2014.7px;top:241.0px;width:1.0px;height:7.3px;background:#34343a;"></div><div class="b" style="left:355.0px;top:321.0px;width:1800.0px;height:162.0px;background:rgba(120,30,120,0.16);border-radius:8px;border:1.500px solid #a8389f;"></div><div class="c" style="left:357.2px;top:322.8px;width:26.0px;background:#f74dea"><svg class="w" viewBox="0 -20 280 40"><use href="#wv" fill="#c53cbc" x="0"/></svg><i class="tb" style="left:4.9px;background:rgba(150,40,145,0.55)">T</i></div><div class="c" style="left:384.2px;top:322.8px;width:25.0px;background:#f74dea"><svg class="w" viewBox="0 -20 280 40"><use href="#wv" fill="#c53cbc" x="-45"/></svg><i class="tb" style="left:3.9px;background:rgba(150,40,145,0.55)">T</i></div><div class="c" style="left:457.2px;top:322.8px;width:26.0px;background:#f74dea"><svg class="w" viewBox="0 -20 280 40"><use href="#wv" fill="#c53cbc" x="-50"/></svg><i class="tb" style="left:5.4px;background:rgba(150,40,145,0.55)">T</i></div><div class="c" style="left:507.2px;top:322.8px;width:126.3px;background:#f74dea"><svg class="w" viewBox="0 -20 280 40"><use href="#wv" fill="#c53cbc" x="-15"/></svg><i class="tb" style="left:7.5px;background:rgba(150,40,145,0.55)">T</i></div><div class="c" style="left:634.2px;top:322.8px;width:100.3px;background:#f74dea"><svg class="w" viewBox="0 -20 280 40"><use href="#wv" fill="#c53cbc" x="-110"/></svg><i class="tb" style="left:9.5px;background:rgba(150,40,145,0.55)">T</i></div><div class="c" style="left:782.2px;top:322.8px;width:26.0px;background:#f74dea"><svg class="w" viewBox="0 -20 280 40"><use href="#wv" fill="#c53cbc" x="-2"/></svg><i class="tb" style="left:11.9px;background:rgba(150,40,145,0.55)">T</i></div><div class="c" style="left:833.2px;top:322.8px;width:74.0px;background:#f74dea"><svg class="w" viewBox="0 -20 280 40"><use href="#wv" fill="#c53cbc" x="-89"/></svg><i class="tb" style="left:13.9px;background:rgba(150,40,145,0.55)">T</i></div><div class="c" style="left:908.2px;top:322.8px;width:25.0px;background:#f74dea"><svg class="w" viewBox="0 -20 280 40"><use href="#wv" fill="#c53cbc" x="-96"/></svg></div><div class="c" style="left:816.2px;top:404.3px;width:26.0px;background:#f74dea"><svg class="w" viewBox="0 -20 280 40"><use href="#wv" fill="#c53cbc" x="0"/></svg><i class="tb" style="left:4.9px;background:rgba(150,40,145,0.55)">T</i></div><div class="c" style="left:843.2px;top:404.3px;width:25.0px;background:#f74dea"><svg class="w" viewBox="0 -20 280 40"><use href="#wv" fill="#c53cbc" x="-45"/></svg><i class="tb" style="left:3.9px;background:rgba(150,40,145,0.55)">T</i></div><div class="c" style="left:916.2px;top:404.3px;width:26.0px;background:#f74dea"><svg class="w" viewBox="0 -20 280 40"><use href="#wv" fill="#c53cbc" x="-50"/></svg><i class="tb" style="left:5.4px;background:rgba(150,40,145,0.55)">T</i></div><div class="c" style="left:966.2px;top:404.3px;width:126.3px;background:#f74dea"><svg class="w" viewBox="0 -20 280 40"><use href="#wv" fill="#c53cbc" x="-15"/></svg><i class="tb" style="left:7.5px;background:rgba(150,40,145,0.55)">T</i></div><div class="c" style="left:1093.2px;top:404.3px;width:100.3px;background:#f74dea"><svg class="w" viewBox="0 -20 280 40"><use href="#wv" fill="#c53cbc" x="-110"/></svg><i class="tb" style="left:9.5px;background:rgba(150,40,145,0.55)">T</i></div><div class="c" style="left:1241.2px;top:404.3px;width:26.0px;background:#f74dea"><svg class="w" viewBox="0 -20 280 40"><use href="#wv" fill="#c53cbc" x="-2"/></svg><i class="tb" style="left:11.9px;background:rgba(150,40,145,0.55)">T</i></div><div class="c" style="left:1292.2px;top:404.3px;width:74.0px;background:#f74dea"><svg class="w" viewBox="0 -20 280 40"><use href="#wv" fill="#c53cbc" x="-89"/></svg><i class="tb" style="left:13.9px;background:rgba(150,40,145,0.55)">T</i></div><div class="c" style="left:1367.2px;top:404.3px;width:25.0px;background:#f74dea"><svg class="w" viewBox="0 -20 280 40"><use href="#wv" fill="#c53cbc" x="-96"/></svg></div><div class="c" style="left:1420.7px;top:404.3px;width:26.0px;background:#f74dea"><svg class="w" viewBox="0 -20 280 40"><use href="#wv" fill="#c53cbc" x="0"/></svg><i class="tb" style="left:4.9px;background:rgba(150,40,145,0.55)">T</i></div><div class="c" style="left:1447.7px;top:404.3px;width:25.0px;background:#f74dea"><svg class="w" viewBox="0 -20 280 40"><use href="#wv" fill="#c53cbc" x="-45"/></svg><i class="tb" style="left:3.9px;background:rgba(150,40,145,0.55)">T</i></div><div class="c" style="left:1520.7px;top:404.3px;width:26.0px;background:#f74dea"><svg class="w" viewBox="0 -20 280 40"><use href="#wv" fill="#c53cbc" x="-50"/></svg><i class="tb" style="left:5.4px;background:rgba(150,40,145,0.55)">T</i></div><div class="c" style="left:1570.7px;top:404.3px;width:126.3px;background:#f74dea"><svg class="w" viewBox="0 -20 280 40"><use href="#wv" fill="#c53cbc" x="-15"/></svg><i class="tb" style="left:7.5px;background:rgba(150,40,145,0.55)">T</i></div><div class="c" style="left:1697.7px;top:404.3px;width:100.3px;background:#f74dea"><svg class="w" viewBox="0 -20 280 40"><use href="#wv" fill="#c53cbc" x="-110"/></svg><i class="tb" style="left:9.5px;background:rgba(150,40,145,0.55)">T</i></div><div class="c" style="left:1845.7px;top:404.3px;width:26.0px;background:#f74dea"><svg class="w" viewBox="0 -20 280 40"><use href="#wv" fill="#c53cbc" x="-2"/></svg><i class="tb" style="left:11.9px;background:rgba(150,40,145,0.55)">T</i></div><div class="c" style="left:1896.7px;top:404.3px;width:74.0px;background:#f74dea"><svg class="w" viewBox="0 -20 280 40"><use href="#wv" fill="#c53cbc" x="-89"/></svg><i class="tb" style="left:13.9px;background:rgba(150,40,145,0.55)">T</i></div><div class="c" style="left:1971.7px;top:404.3px;width:25.0px;background:#f74dea"><svg class="w" viewBox="0 -20 280 40"><use href="#wv" fill="#c53cbc" x="-96"/></svg></div><div class="b" style="left:354.5px;top:285.0px;width:722.5px;height:31.0px;background:#242428;border-radius:8px;"></div><svg style="left:362.0px;top:292.2px" width="16" height="16" viewBox="0 0 16 16" stroke="#f74dea" stroke-width="1.400" stroke-linecap="round"><path d="M1.700 5.800v4.400M4.700 2.300v11.400M7.800 5v6M10.700 5.200v5.600M13.300 7v2"/></svg><div class="b" style="left:383px;top:290.0px;width:161.500px;height:24px;overflow:hidden"><span class="t" style="left:0.0px;top:3.9px;font-size:14px;color:#f74dea;transform:scaleX(0.952);font-weight:700;">Vocals</span><span class="t" style="left:49.5px;top:3.9px;font-size:14px;color:#fff;transform:scaleX(0.983);font-weight:700;">CollectionName</span></div><div class="b" style="left:541.5px;top:293.0px;width:1.0px;height:15.0px;background:#3a3a40;"></div><div class="b" style="left:544.5px;top:290.0px;width:71.0px;height:21.5px;background:#333338;border-radius:5px;border:1px solid #4c4c52;"></div><svg style="left:550.500px;top:295.0px" width="11" height="11" viewBox="0 0 11 11" stroke="#dcf80e" stroke-width="1.300" fill="none"><path d="M0.400 1.900h2.700M4.200 -0.200v4.200M5.500 1.900h5.400M0.400 8.200h6M7.700 6.100v4.200M8.700 8.200h2.200"/></svg><span class="t" style="left:566.0px;top:294.4px;font-size:14px;color:#fff;transform:scaleX(0.915);font-weight:700;font-style:italic;">Effects</span><div class="b" style="left:618.5px;top:293.0px;width:1.0px;height:15.0px;background:#3a3a40;"></div><div class="b" style="left:623.0px;top:291.5px;width:38.5px;height:19.0px;background:#303035;border-radius:5px;"></div><span class="t" style="left:629.3px;top:294.4px;font-size:14px;color:#70707a;transform:scaleX(1.012);-webkit-text-stroke:0.350px #70707a;">solo</span><div class="b" style="left:666.5px;top:291.5px;width:38.5px;height:19.0px;background:#303035;border-radius:5px;"></div><span class="t" style="left:669.2px;top:294.4px;font-size:14px;color:#70707a;transform:scaleX(1.060);-webkit-text-stroke:0.350px #70707a;">mute</span><div class="b" style="left:709.0px;top:288.5px;width:163.0px;height:23.0px;background:#1b1b1e;border-radius:7px;"></div><svg style="left:715.500px;top:293.5px" width="20" height="13" viewBox="0 0 20 13"><path fill="#fff" d="M0 3.500h3L8.500 0v13L3 9.500H0z"/><path stroke="#dcf80e" stroke-width="1.300" d="M12 4v5M15.500 2.500v8"/></svg><div class="b" style="left:742.0px;top:291.5px;width:54.5px;height:17.5px;background:#333336;border-radius:4px;"></div><span class="t" style="left:746.8px;top:293.8px;font-size:11.5px;color:#8a8a90;transform:scaleX(1.062);-webkit-text-stroke:0.300px #8a8a90;">0</span><div class="b" style="left:774.0px;top:290.0px;width:23.0px;height:20.5px;background:#4a4a4e;border-radius:5px;border:1px solid #6a6a70;"></div><span class="t" style="left:778.5px;top:293.3px;font-size:14px;color:#fff;transform:scaleX(0.899);font-weight:700;">10</span><span class="t" style="left:847.0px;top:293.8px;font-size:11.5px;color:#a0a0a6;transform:scaleX(0.990);-webkit-text-stroke:0.300px #a0a0a6;">100</span><div class="b" style="left:887.0px;top:297.7px;width:51.5px;height:1.3px;background:#1d9066;"></div><div class="b" style="left:887.0px;top:301.7px;width:40.0px;height:1.3px;background:#1d9066;"></div><div class="b" style="left:942.5px;top:296.5px;width:1.5px;height:2.0px;background:#1f9a6a;"></div><div class="b" style="left:942.5px;top:301.5px;width:1.5px;height:2.0px;background:#1f9a6a;"></div><div class="b" style="left:953.5px;top:288.5px;width:119.5px;height:23.0px;background:#1b1b1e;border-radius:7px;"></div><span class="t" style="left:964.5px;top:293.8px;font-size:11.5px;color:#9a9aa0;transform:scaleX(0.853);font-weight:700;">L</span><span class="t" style="left:1057.0px;top:293.8px;font-size:11.5px;color:#9a9aa0;transform:scaleX(0.902);font-weight:700;">R</span><div class="b" style="left:1000.0px;top:290.0px;width:23.0px;height:20.5px;background:#303034;border-radius:5px;border:1px solid #55555a;"></div><span class="t" style="left:1004.5px;top:293.3px;font-size:14px;color:#fff;transform:scaleX(0.899);font-weight:700;">10</span><div class="b" style="left:355.0px;top:529.0px;width:1800.0px;height:163.0px;border-radius:9px;border:1px solid #3a3a3e;border-top-color:#2e2e32;"></div><div class="c" style="left:357.2px;top:531.8px;width:26.0px;background:#14f4a4"><svg class="w" viewBox="0 -20 280 40"><use href="#wv" fill="#12c184" x="0"/></svg><i class="tb" style="left:4.9px;background:rgba(10,140,95,0.55)">T</i></div><div class="c" style="left:384.2px;top:531.8px;width:25.0px;background:#14f4a4"><svg class="w" viewBox="0 -20 280 40"><use href="#wv" fill="#12c184" x="-45"/></svg><i class="tb" style="left:3.9px;background:rgba(10,140,95,0.55)">T</i></div><div class="c" style="left:457.2px;top:531.8px;width:26.0px;background:#14f4a4"><svg class="w" viewBox="0 -20 280 40"><use href="#wv" fill="#12c184" x="-50"/></svg><i class="tb" style="left:5.4px;background:rgba(10,140,95,0.55)">T</i></div><div class="c" style="left:507.2px;top:531.8px;width:126.3px;background:#14f4a4"><svg class="w" viewBox="0 -20 280 40"><use href="#wv" fill="#12c184" x="-15"/></svg><i class="tb" style="left:7.5px;background:rgba(10,140,95,0.55)">T</i></div><div class="c" style="left:634.2px;top:531.8px;width:100.3px;background:#14f4a4"><svg class="w" viewBox="0 -20 280 40"><use href="#wv" fill="#12c184" x="-110"/></svg><i class="tb" style="left:9.5px;background:rgba(10,140,95,0.55)">T</i></div><div class="c" style="left:782.2px;top:531.8px;width:26.0px;background:#14f4a4"><svg class="w" viewBox="0 -20 280 40"><use href="#wv" fill="#12c184" x="-2"/></svg><i class="tb" style="left:11.9px;background:rgba(10,140,95,0.55)">T</i></div><div class="c" style="left:833.2px;top:531.8px;width:74.0px;background:#14f4a4"><svg class="w" viewBox="0 -20 280 40"><use href="#wv" fill="#12c184" x="-89"/></svg><i class="tb" style="left:13.9px;background:rgba(10,140,95,0.55)">T</i></div><div class="c" style="left:908.2px;top:531.8px;width:25.0px;background:#14f4a4"><svg class="w" viewBox="0 -20 280 40"><use href="#wv" fill="#12c184" x="-96"/></svg></div><div class="c" style="left:816.2px;top:613.3px;width:26.0px;background:#14f4a4"><svg class="w" viewBox="0 -20 280 40"><use href="#wv" fill="#12c184" x="0"/></svg><i class="tb" style="left:4.9px;background:rgba(10,140,95,0.55)">T</i></div><div class="c" style="left:843.2px;top:613.3px;width:25.0px;background:#14f4a4"><svg class="w" viewBox="0 -20 280 40"><use href="#wv" fill="#12c184" x="-45"/></svg><i class="tb" style="left:3.9px;background:rgba(10,140,95,0.55)">T</i></div><div class="c" style="left:916.2px;top:613.3px;width:26.0px;background:#14f4a4"><svg class="w" viewBox="0 -20 280 40"><use href="#wv" fill="#12c184" x="-50"/></svg><i class="tb" style="left:5.4px;background:rgba(10,140,95,0.55)">T</i></div><div class="c" style="left:966.2px;top:613.3px;width:126.3px;background:#14f4a4"><svg class="w" viewBox="0 -20 280 40"><use href="#wv" fill="#12c184" x="-15"/></svg><i class="tb" style="left:7.5px;background:rgba(10,140,95,0.55)">T</i></div><div class="c" style="left:1093.2px;top:613.3px;width:100.3px;background:#14f4a4"><svg class="w" viewBox="0 -20 280 40"><use href="#wv" fill="#12c184" x="-110"/></svg><i class="tb" style="left:9.5px;background:rgba(10,140,95,0.55)">T</i></div><div class="c" style="left:1241.2px;top:613.3px;width:26.0px;background:#14f4a4"><svg class="w" viewBox="0 -20 280 40"><use href="#wv" fill="#12c184" x="-2"/></svg><i class="tb" style="left:11.9px;background:rgba(10,140,95,0.55)">T</i></div><div class="c" style="left:1292.2px;top:613.3px;width:74.0px;background:#14f4a4"><svg class="w" viewBox="0 -20 280 40"><use href="#wv" fill="#12c184" x="-89"/></svg><i class="tb" style="left:13.9px;background:rgba(10,140,95,0.55)">T</i></div><div class="c" style="left:1367.2px;top:613.3px;width:25.0px;background:#14f4a4"><svg class="w" viewBox="0 -20 280 40"><use href="#wv" fill="#12c184" x="-96"/></svg></div><div class="c" style="left:1420.7px;top:613.3px;width:26.0px;background:#14f4a4"><svg class="w" viewBox="0 -20 280 40"><use href="#wv" fill="#12c184" x="0"/></svg><i class="tb" style="left:4.9px;background:rgba(10,140,95,0.55)">T</i></div><div class="c" style="left:1447.7px;top:613.3px;width:25.0px;background:#14f4a4"><svg class="w" viewBox="0 -20 280 40"><use href="#wv" fill="#12c184" x="-45"/></svg><i class="tb" style="left:3.9px;background:rgba(10,140,95,0.55)">T</i></div><div class="c" style="left:1520.7px;top:613.3px;width:26.0px;background:#14f4a4"><svg class="w" viewBox="0 -20 280 40"><use href="#wv" fill="#12c184" x="-50"/></svg><i class="tb" style="left:5.4px;background:rgba(10,140,95,0.55)">T</i></div><div class="c" style="left:1570.7px;top:613.3px;width:126.3px;background:#14f4a4"><svg class="w" viewBox="0 -20 280 40"><use href="#wv" fill="#12c184" x="-15"/></svg><i class="tb" style="left:7.5px;background:rgba(10,140,95,0.55)">T</i></div><div class="c" style="left:1697.7px;top:613.3px;width:100.3px;background:#14f4a4"><svg class="w" viewBox="0 -20 280 40"><use href="#wv" fill="#12c184" x="-110"/></svg><i class="tb" style="left:9.5px;background:rgba(10,140,95,0.55)">T</i></div><div class="c" style="left:1845.7px;top:613.3px;width:26.0px;background:#14f4a4"><svg class="w" viewBox="0 -20 280 40"><use href="#wv" fill="#12c184" x="-2"/></svg><i class="tb" style="left:11.9px;background:rgba(10,140,95,0.55)">T</i></div><div class="c" style="left:1896.7px;top:613.3px;width:74.0px;background:#14f4a4"><svg class="w" viewBox="0 -20 280 40"><use href="#wv" fill="#12c184" x="-89"/></svg><i class="tb" style="left:13.9px;background:rgba(10,140,95,0.55)">T</i></div><div class="c" style="left:1971.7px;top:613.3px;width:25.0px;background:#14f4a4"><svg class="w" viewBox="0 -20 280 40"><use href="#wv" fill="#12c184" x="-96"/></svg></div><div class="b" style="left:354.5px;top:494.0px;width:722.5px;height:31.0px;background:rgba(36,36,40,0.96);border-radius:8px;"></div><svg style="left:363.3px;top:502.2px" width="14.6" height="14.6" viewBox="0 0 16 16" stroke="#77777f" stroke-width="1.400" stroke-linecap="round"><path d="M1.700 5.800v4.400M4.700 2.300v11.400M7.800 5v6M10.700 5.200v5.600M13.300 7v2"/></svg><div class="b" style="left:383px;top:499.0px;width:161.500px;height:24px;overflow:hidden"><span class="t" style="left:0.0px;top:3.9px;font-size:14px;color:#77777f;transform:scaleX(0.936);font-weight:700;">Acoustic Drums</span><span class="t" style="left:108.0px;top:3.9px;font-size:14px;color:#c4c4ca;transform:scaleX(0.942);font-weight:700;">Cajun Ace</span></div><div class="b" style="left:541.5px;top:502.0px;width:1.0px;height:15.0px;background:#3a3a40;"></div><div class="b" style="left:545.3px;top:500.3px;width:69.0px;height:19.3px;background:#2c2c30;border-radius:5px;"></div><svg style="left:550.500px;top:504.0px" width="11" height="11" viewBox="0 0 11 11" stroke="#66666e" stroke-width="1.300" fill="none"><path d="M0.400 1.900h2.700M4.200 -0.200v4.200M5.500 1.900h5.400M0.400 8.200h6M7.700 6.100v4.200M8.700 8.200h2.200"/></svg><span class="t" style="left:566.0px;top:503.4px;font-size:14px;color:#77777f;transform:scaleX(0.915);font-weight:700;font-style:italic;">Effects</span><div class="b" style="left:618.5px;top:502.0px;width:1.0px;height:15.0px;background:#3a3a40;"></div><div class="b" style="left:623.0px;top:500.5px;width:38.5px;height:19.0px;background:#303035;border-radius:5px;"></div><span class="t" style="left:629.3px;top:503.4px;font-size:14px;color:#70707a;transform:scaleX(1.012);-webkit-text-stroke:0.350px #70707a;">solo</span><div class="b" style="left:666.5px;top:500.5px;width:38.5px;height:19.0px;background:#303035;border-radius:5px;"></div><span class="t" style="left:669.2px;top:503.4px;font-size:14px;color:#70707a;transform:scaleX(1.060);-webkit-text-stroke:0.350px #70707a;">mute</span><div class="b" style="left:709.0px;top:497.5px;width:163.0px;height:23.0px;background:#1b1b1e;border-radius:7px;"></div><svg style="left:715.500px;top:502.5px" width="20" height="13" viewBox="0 0 20 13"><path fill="#fff" d="M0 3.500h3L8.500 0v13L3 9.500H0z"/><path stroke="#dcf80e" stroke-width="1.300" d="M12.500 5v3"/></svg><div class="b" style="left:742.0px;top:499.3px;width:64.5px;height:20.5px;background:#333336;border-radius:4.5px;"></div><span class="t" style="left:746.8px;top:502.8px;font-size:11.5px;color:#a0a0a8;transform:scaleX(1.062);-webkit-text-stroke:0.300px #a0a0a8;">0</span><span class="t" style="left:847.0px;top:502.8px;font-size:11.5px;color:#b4b4ba;transform:scaleX(0.990);-webkit-text-stroke:0.300px #b4b4ba;">100</span><div class="b" style="left:887.0px;top:506.5px;width:51.5px;height:1.5px;background:#2e2e32;"></div><div class="b" style="left:887.0px;top:510.5px;width:40.0px;height:1.5px;background:#2e2e32;"></div><div class="b" style="left:953.5px;top:497.5px;width:119.5px;height:23.0px;background:#1b1b1e;border-radius:7px;"></div><span class="t" style="left:964.5px;top:502.8px;font-size:11.5px;color:#9a9aa0;transform:scaleX(0.853);font-weight:700;">L</span><span class="t" style="left:1057.0px;top:502.8px;font-size:11.5px;color:#9a9aa0;transform:scaleX(0.902);font-weight:700;">R</span><div class="b" style="left:1001.0px;top:499.3px;width:20.5px;height:20.5px;background:#333336;border-radius:4.5px;"></div><div class="b" style="left:355.0px;top:738.0px;width:1800.0px;height:163.0px;border-radius:9px;border:1px solid #3a3a3e;border-top-color:#2e2e32;"></div><div class="c" style="left:357.2px;top:740.8px;width:26.0px;background:#f55000"><svg class="w" viewBox="0 -20 280 40"><use href="#wv" fill="#c64200" x="0"/></svg><i class="tb" style="left:4.9px;background:rgba(160,50,0,0.55)">T</i></div><div class="c" style="left:384.2px;top:740.8px;width:25.0px;background:#f55000"><svg class="w" viewBox="0 -20 280 40"><use href="#wv" fill="#c64200" x="-45"/></svg><i class="tb" style="left:3.9px;background:rgba(160,50,0,0.55)">T</i></div><div class="c" style="left:457.2px;top:740.8px;width:26.0px;background:#f55000"><svg class="w" viewBox="0 -20 280 40"><use href="#wv" fill="#c64200" x="-50"/></svg><i class="tb" style="left:5.4px;background:rgba(160,50,0,0.55)">T</i></div><div class="c" style="left:507.2px;top:740.8px;width:126.3px;background:#f55000"><svg class="w" viewBox="0 -20 280 40"><use href="#wv" fill="#c64200" x="-15"/></svg><i class="tb" style="left:7.5px;background:rgba(160,50,0,0.55)">T</i></div><div class="c" style="left:634.2px;top:740.8px;width:100.3px;background:#f55000"><svg class="w" viewBox="0 -20 280 40"><use href="#wv" fill="#c64200" x="-110"/></svg><i class="tb" style="left:9.5px;background:rgba(160,50,0,0.55)">T</i></div><div class="c" style="left:782.2px;top:740.8px;width:26.0px;background:#f55000"><svg class="w" viewBox="0 -20 280 40"><use href="#wv" fill="#c64200" x="-2"/></svg><i class="tb" style="left:11.9px;background:rgba(160,50,0,0.55)">T</i></div><div class="c" style="left:833.2px;top:740.8px;width:74.0px;background:#f55000"><svg class="w" viewBox="0 -20 280 40"><use href="#wv" fill="#c64200" x="-89"/></svg><i class="tb" style="left:13.9px;background:rgba(160,50,0,0.55)">T</i></div><div class="c" style="left:908.2px;top:740.8px;width:25.0px;background:#f55000"><svg class="w" viewBox="0 -20 280 40"><use href="#wv" fill="#c64200" x="-96"/></svg></div><div class="c" style="left:816.2px;top:822.3px;width:26.0px;background:#f55000"><svg class="w" viewBox="0 -20 280 40"><use href="#wv" fill="#c64200" x="0"/></svg><i class="tb" style="left:4.9px;background:rgba(160,50,0,0.55)">T</i></div><div class="c" style="left:843.2px;top:822.3px;width:25.0px;background:#f55000"><svg class="w" viewBox="0 -20 280 40"><use href="#wv" fill="#c64200" x="-45"/></svg><i class="tb" style="left:3.9px;background:rgba(160,50,0,0.55)">T</i></div><div class="c" style="left:916.2px;top:822.3px;width:26.0px;background:#f55000"><svg class="w" viewBox="0 -20 280 40"><use href="#wv" fill="#c64200" x="-50"/></svg><i class="tb" style="left:5.4px;background:rgba(160,50,0,0.55)">T</i></div><div class="c" style="left:966.2px;top:822.3px;width:126.3px;background:#f55000"><svg class="w" viewBox="0 -20 280 40"><use href="#wv" fill="#c64200" x="-15"/></svg><i class="tb" style="left:7.5px;background:rgba(160,50,0,0.55)">T</i></div><div class="c" style="left:1093.2px;top:822.3px;width:100.3px;background:#f55000"><svg class="w" viewBox="0 -20 280 40"><use href="#wv" fill="#c64200" x="-110"/></svg><i class="tb" style="left:9.5px;background:rgba(160,50,0,0.55)">T</i></div><div class="c" style="left:1241.2px;top:822.3px;width:26.0px;background:#f55000"><svg class="w" viewBox="0 -20 280 40"><use href="#wv" fill="#c64200" x="-2"/></svg><i class="tb" style="left:11.9px;background:rgba(160,50,0,0.55)">T</i></div><div class="c" style="left:1292.2px;top:822.3px;width:74.0px;background:#f55000"><svg class="w" viewBox="0 -20 280 40"><use href="#wv" fill="#c64200" x="-89"/></svg><i class="tb" style="left:13.9px;background:rgba(160,50,0,0.55)">T</i></div><div class="c" style="left:1367.2px;top:822.3px;width:25.0px;background:#f55000"><svg class="w" viewBox="0 -20 280 40"><use href="#wv" fill="#c64200" x="-96"/></svg></div><div class="c" style="left:1420.7px;top:822.3px;width:26.0px;background:#f55000"><svg class="w" viewBox="0 -20 280 40"><use href="#wv" fill="#c64200" x="0"/></svg><i class="tb" style="left:4.9px;background:rgba(160,50,0,0.55)">T</i></div><div class="c" style="left:1447.7px;top:822.3px;width:25.0px;background:#f55000"><svg class="w" viewBox="0 -20 280 40"><use href="#wv" fill="#c64200" x="-45"/></svg><i class="tb" style="left:3.9px;background:rgba(160,50,0,0.55)">T</i></div><div class="c" style="left:1520.7px;top:822.3px;width:26.0px;background:#f55000"><svg class="w" viewBox="0 -20 280 40"><use href="#wv" fill="#c64200" x="-50"/></svg><i class="tb" style="left:5.4px;background:rgba(160,50,0,0.55)">T</i></div><div class="c" style="left:1570.7px;top:822.3px;width:126.3px;background:#f55000"><svg class="w" viewBox="0 -20 280 40"><use href="#wv" fill="#c64200" x="-15"/></svg><i class="tb" style="left:7.5px;background:rgba(160,50,0,0.55)">T</i></div><div class="c" style="left:1697.7px;top:822.3px;width:100.3px;background:#f55000"><svg class="w" viewBox="0 -20 280 40"><use href="#wv" fill="#c64200" x="-110"/></svg><i class="tb" style="left:9.5px;background:rgba(160,50,0,0.55)">T</i></div><div class="c" style="left:1845.7px;top:822.3px;width:26.0px;background:#f55000"><svg class="w" viewBox="0 -20 280 40"><use href="#wv" fill="#c64200" x="-2"/></svg><i class="tb" style="left:11.9px;background:rgba(160,50,0,0.55)">T</i></div><div class="c" style="left:1896.7px;top:822.3px;width:74.0px;background:#f55000"><svg class="w" viewBox="0 -20 280 40"><use href="#wv" fill="#c64200" x="-89"/></svg><i class="tb" style="left:13.9px;background:rgba(160,50,0,0.55)">T</i></div><div class="c" style="left:1971.7px;top:822.3px;width:25.0px;background:#f55000"><svg class="w" viewBox="0 -20 280 40"><use href="#wv" fill="#c64200" x="-96"/></svg></div><div class="b" style="left:354.5px;top:703.0px;width:722.5px;height:31.0px;background:rgba(36,36,40,0.96);border-radius:8px;"></div><svg style="left:363.3px;top:711.2px" width="14.6" height="14.6" viewBox="0 0 16 16" stroke="#77777f" stroke-width="1.400" stroke-linecap="round"><path d="M1.700 5.800v4.400M4.700 2.300v11.400M7.800 5v6M10.700 5.200v5.600M13.300 7v2"/></svg><div class="b" style="left:383px;top:708.0px;width:161.500px;height:24px;overflow:hidden"><span class="t" style="left:0.0px;top:3.9px;font-size:14px;color:#77777f;transform:scaleX(0.952);font-weight:700;">Electric Guitars</span><span class="t" style="left:106.0px;top:3.9px;font-size:14px;color:#c4c4ca;transform:scaleX(0.940);font-weight:700;">Warm Cacoon</span></div><div class="b" style="left:541.5px;top:711.0px;width:1.0px;height:15.0px;background:#3a3a40;"></div><div class="b" style="left:545.3px;top:709.3px;width:69.0px;height:19.3px;background:#2c2c30;border-radius:5px;"></div><svg style="left:550.500px;top:713.0px" width="11" height="11" viewBox="0 0 11 11" stroke="#66666e" stroke-width="1.300" fill="none"><path d="M0.400 1.900h2.700M4.200 -0.200v4.200M5.500 1.900h5.400M0.400 8.200h6M7.700 6.100v4.200M8.700 8.200h2.200"/></svg><span class="t" style="left:566.0px;top:712.4px;font-size:14px;color:#77777f;transform:scaleX(0.915);font-weight:700;font-style:italic;">Effects</span><div class="b" style="left:618.5px;top:711.0px;width:1.0px;height:15.0px;background:#3a3a40;"></div><div class="b" style="left:623.0px;top:709.5px;width:38.5px;height:19.0px;background:#303035;border-radius:5px;"></div><span class="t" style="left:629.3px;top:712.4px;font-size:14px;color:#70707a;transform:scaleX(1.012);-webkit-text-stroke:0.350px #70707a;">solo</span><div class="b" style="left:666.5px;top:709.5px;width:38.5px;height:19.0px;background:#303035;border-radius:5px;"></div><span class="t" style="left:669.2px;top:712.4px;font-size:14px;color:#70707a;transform:scaleX(1.060);-webkit-text-stroke:0.350px #70707a;">mute</span><div class="b" style="left:709.0px;top:706.5px;width:163.0px;height:23.0px;background:#1b1b1e;border-radius:7px;"></div><svg style="left:715.500px;top:711.5px" width="20" height="13" viewBox="0 0 20 13"><path fill="#fff" d="M0 3.500h3L8.500 0v13L3 9.500H0z"/><path stroke="#dcf80e" stroke-width="1.300" d="M12.500 5v3"/></svg><div class="b" style="left:742.0px;top:708.3px;width:64.5px;height:20.5px;background:#333336;border-radius:4.5px;"></div><span class="t" style="left:746.8px;top:711.8px;font-size:11.5px;color:#a0a0a8;transform:scaleX(1.062);-webkit-text-stroke:0.300px #a0a0a8;">0</span><span class="t" style="left:847.0px;top:711.8px;font-size:11.5px;color:#b4b4ba;transform:scaleX(0.990);-webkit-text-stroke:0.300px #b4b4ba;">100</span><div class="b" style="left:887.0px;top:715.5px;width:51.5px;height:1.5px;background:#2e2e32;"></div><div class="b" style="left:887.0px;top:719.5px;width:40.0px;height:1.5px;background:#2e2e32;"></div><div class="b" style="left:953.5px;top:706.5px;width:119.5px;height:23.0px;background:#1b1b1e;border-radius:7px;"></div><span class="t" style="left:964.5px;top:711.8px;font-size:11.5px;color:#9a9aa0;transform:scaleX(0.853);font-weight:700;">L</span><span class="t" style="left:1057.0px;top:711.8px;font-size:11.5px;color:#9a9aa0;transform:scaleX(0.902);font-weight:700;">R</span><div class="b" style="left:1001.0px;top:708.3px;width:20.5px;height:20.5px;background:#333336;border-radius:4.5px;"></div><div class="b" style="left:355.0px;top:947.0px;width:1800.0px;height:163.0px;border-radius:9px;border:1px solid #3a3a3e;border-top-color:#2e2e32;"></div><div class="c" style="left:357.2px;top:949.8px;width:26.0px;background:#059bff"><svg class="w" viewBox="0 -20 280 40"><use href="#wv" fill="#0b80d2" x="0"/></svg><i class="tb" style="left:4.9px;background:rgba(5,95,165,0.55)">T</i></div><div class="c" style="left:384.2px;top:949.8px;width:25.0px;background:#059bff"><svg class="w" viewBox="0 -20 280 40"><use href="#wv" fill="#0b80d2" x="-45"/></svg><i class="tb" style="left:3.9px;background:rgba(5,95,165,0.55)">T</i></div><div class="c" style="left:457.2px;top:949.8px;width:26.0px;background:#059bff"><svg class="w" viewBox="0 -20 280 40"><use href="#wv" fill="#0b80d2" x="-50"/></svg><i class="tb" style="left:5.4px;background:rgba(5,95,165,0.55)">T</i></div><div class="c" style="left:507.2px;top:949.8px;width:126.3px;background:#059bff"><svg class="w" viewBox="0 -20 280 40"><use href="#wv" fill="#0b80d2" x="-15"/></svg><i class="tb" style="left:7.5px;background:rgba(5,95,165,0.55)">T</i></div><div class="c" style="left:634.2px;top:949.8px;width:100.3px;background:#059bff"><svg class="w" viewBox="0 -20 280 40"><use href="#wv" fill="#0b80d2" x="-110"/></svg><i class="tb" style="left:9.5px;background:rgba(5,95,165,0.55)">T</i></div><div class="c" style="left:782.2px;top:949.8px;width:26.0px;background:#059bff"><svg class="w" viewBox="0 -20 280 40"><use href="#wv" fill="#0b80d2" x="-2"/></svg><i class="tb" style="left:11.9px;background:rgba(5,95,165,0.55)">T</i></div><div class="c" style="left:833.2px;top:949.8px;width:74.0px;background:#059bff"><svg class="w" viewBox="0 -20 280 40"><use href="#wv" fill="#0b80d2" x="-89"/></svg><i class="tb" style="left:13.9px;background:rgba(5,95,165,0.55)">T</i></div><div class="c" style="left:908.2px;top:949.8px;width:25.0px;background:#059bff"><svg class="w" viewBox="0 -20 280 40"><use href="#wv" fill="#0b80d2" x="-96"/></svg></div><div class="c" style="left:816.2px;top:1031.3px;width:26.0px;background:#059bff"><svg class="w" viewBox="0 -20 280 40"><use href="#wv" fill="#0b80d2" x="0"/></svg><i class="tb" style="left:4.9px;background:rgba(5,95,165,0.55)">T</i></div><div class="c" style="left:843.2px;top:1031.3px;width:25.0px;background:#059bff"><svg class="w" viewBox="0 -20 280 40"><use href="#wv" fill="#0b80d2" x="-45"/></svg><i class="tb" style="left:3.9px;background:rgba(5,95,165,0.55)">T</i></div><div class="c" style="left:916.2px;top:1031.3px;width:26.0px;background:#059bff"><svg class="w" viewBox="0 -20 280 40"><use href="#wv" fill="#0b80d2" x="-50"/></svg><i class="tb" style="left:5.4px;background:rgba(5,95,165,0.55)">T</i></div><div class="c" style="left:966.2px;top:1031.3px;width:126.3px;background:#059bff"><svg class="w" viewBox="0 -20 280 40"><use href="#wv" fill="#0b80d2" x="-15"/></svg><i class="tb" style="left:7.5px;background:rgba(5,95,165,0.55)">T</i></div><div class="c" style="left:1093.2px;top:1031.3px;width:100.3px;background:#059bff"><svg class="w" viewBox="0 -20 280 40"><use href="#wv" fill="#0b80d2" x="-110"/></svg><i class="tb" style="left:9.5px;background:rgba(5,95,165,0.55)">T</i></div><div class="c" style="left:1241.2px;top:1031.3px;width:26.0px;background:#059bff"><svg class="w" viewBox="0 -20 280 40"><use href="#wv" fill="#0b80d2" x="-2"/></svg><i class="tb" style="left:11.9px;background:rgba(5,95,165,0.55)">T</i></div><div class="c" style="left:1292.2px;top:1031.3px;width:74.0px;background:#059bff"><svg class="w" viewBox="0 -20 280 40"><use href="#wv" fill="#0b80d2" x="-89"/></svg><i class="tb" style="left:13.9px;background:rgba(5,95,165,0.55)">T</i></div><div class="c" style="left:1367.2px;top:1031.3px;width:25.0px;background:#059bff"><svg class="w" viewBox="0 -20 280 40"><use href="#wv" fill="#0b80d2" x="-96"/></svg></div><div class="c" style="left:1420.7px;top:1031.3px;width:26.0px;background:#059bff"><svg class="w" viewBox="0 -20 280 40"><use href="#wv" fill="#0b80d2" x="0"/></svg><i class="tb" style="left:4.9px;background:rgba(5,95,165,0.55)">T</i></div><div class="c" style="left:1447.7px;top:1031.3px;width:25.0px;background:#059bff"><svg class="w" viewBox="0 -20 280 40"><use href="#wv" fill="#0b80d2" x="-45"/></svg><i class="tb" style="left:3.9px;background:rgba(5,95,165,0.55)">T</i></div><div class="c" style="left:1520.7px;top:1031.3px;width:26.0px;background:#059bff"><svg class="w" viewBox="0 -20 280 40"><use href="#wv" fill="#0b80d2" x="-50"/></svg><i class="tb" style="left:5.4px;background:rgba(5,95,165,0.55)">T</i></div><div class="c" style="left:1570.7px;top:1031.3px;width:126.3px;background:#059bff"><svg class="w" viewBox="0 -20 280 40"><use href="#wv" fill="#0b80d2" x="-15"/></svg><i class="tb" style="left:7.5px;background:rgba(5,95,165,0.55)">T</i></div><div class="c" style="left:1697.7px;top:1031.3px;width:100.3px;background:#059bff"><svg class="w" viewBox="0 -20 280 40"><use href="#wv" fill="#0b80d2" x="-110"/></svg><i class="tb" style="left:9.5px;background:rgba(5,95,165,0.55)">T</i></div><div class="c" style="left:1845.7px;top:1031.3px;width:26.0px;background:#059bff"><svg class="w" viewBox="0 -20 280 40"><use href="#wv" fill="#0b80d2" x="-2"/></svg><i class="tb" style="left:11.9px;background:rgba(5,95,165,0.55)">T</i></div><div class="c" style="left:1896.7px;top:1031.3px;width:74.0px;background:#059bff"><svg class="w" viewBox="0 -20 280 40"><use href="#wv" fill="#0b80d2" x="-89"/></svg><i class="tb" style="left:13.9px;background:rgba(5,95,165,0.55)">T</i></div><div class="c" style="left:1971.7px;top:1031.3px;width:25.0px;background:#059bff"><svg class="w" viewBox="0 -20 280 40"><use href="#wv" fill="#0b80d2" x="-96"/></svg></div><div class="b" style="left:354.5px;top:912.0px;width:722.5px;height:31.0px;background:rgba(36,36,40,0.96);border-radius:8px;"></div><svg style="left:363.3px;top:920.2px" width="14.6" height="14.6" viewBox="0 0 16 16" stroke="#77777f" stroke-width="1.400" stroke-linecap="round"><path d="M1.700 5.800v4.400M4.700 2.300v11.400M7.800 5v6M10.700 5.200v5.600M13.300 7v2"/></svg><div class="b" style="left:383px;top:917.0px;width:161.500px;height:24px;overflow:hidden"><span class="t" style="left:0.0px;top:3.9px;font-size:14px;color:#77777f;transform:scaleX(0.921);font-weight:700;">Synths</span><span class="t" style="left:50.5px;top:3.9px;font-size:14px;color:#c4c4ca;transform:scaleX(0.961);font-weight:700;">Equator Rift</span></div><div class="b" style="left:541.5px;top:920.0px;width:1.0px;height:15.0px;background:#3a3a40;"></div><div class="b" style="left:545.3px;top:918.3px;width:69.0px;height:19.3px;background:#2c2c30;border-radius:5px;"></div><svg style="left:550.500px;top:922.0px" width="11" height="11" viewBox="0 0 11 11" stroke="#66666e" stroke-width="1.300" fill="none"><path d="M0.400 1.900h2.700M4.200 -0.200v4.200M5.500 1.900h5.400M0.400 8.200h6M7.700 6.100v4.200M8.700 8.200h2.200"/></svg><span class="t" style="left:566.0px;top:921.4px;font-size:14px;color:#77777f;transform:scaleX(0.918);font-weight:700;font-style:italic;">Q</span><div class="b" style="left:618.5px;top:920.0px;width:1.0px;height:15.0px;background:#3a3a40;"></div><div class="b" style="left:623.0px;top:918.5px;width:38.5px;height:19.0px;background:#303035;border-radius:5px;"></div><span class="t" style="left:629.3px;top:921.4px;font-size:14px;color:#70707a;transform:scaleX(1.012);-webkit-text-stroke:0.350px #70707a;">solo</span><div class="b" style="left:666.5px;top:918.5px;width:38.5px;height:19.0px;background:#303035;border-radius:5px;"></div><span class="t" style="left:669.2px;top:921.4px;font-size:14px;color:#70707a;transform:scaleX(1.060);-webkit-text-stroke:0.350px #70707a;">mute</span><div class="b" style="left:709.0px;top:915.5px;width:163.0px;height:23.0px;background:#1b1b1e;border-radius:7px;"></div><svg style="left:715.500px;top:920.5px" width="20" height="13" viewBox="0 0 20 13"><path fill="#fff" d="M0 3.500h3L8.500 0v13L3 9.500H0z"/><path stroke="#dcf80e" stroke-width="1.300" d="M12.500 5v3"/></svg><div class="b" style="left:742.0px;top:917.3px;width:64.5px;height:20.5px;background:#333336;border-radius:4.5px;"></div><span class="t" style="left:746.8px;top:920.8px;font-size:11.5px;color:#a0a0a8;transform:scaleX(1.062);-webkit-text-stroke:0.300px #a0a0a8;">0</span><span class="t" style="left:847.0px;top:920.8px;font-size:11.5px;color:#b4b4ba;transform:scaleX(0.990);-webkit-text-stroke:0.300px #b4b4ba;">100</span><div class="b" style="left:887.0px;top:924.5px;width:51.5px;height:1.5px;background:#2e2e32;"></div><div class="b" style="left:887.0px;top:928.5px;width:40.0px;height:1.5px;background:#2e2e32;"></div><div class="b" style="left:953.5px;top:915.5px;width:119.5px;height:23.0px;background:#1b1b1e;border-radius:7px;"></div><span class="t" style="left:964.5px;top:920.8px;font-size:11.5px;color:#9a9aa0;transform:scaleX(0.853);font-weight:700;">L</span><span class="t" style="left:1057.0px;top:920.8px;font-size:11.5px;color:#9a9aa0;transform:scaleX(0.902);font-weight:700;">R</span><div class="b" style="left:1001.0px;top:917.3px;width:20.5px;height:20.5px;background:#333336;border-radius:4.5px;"></div><div class="b" style="left:893.8px;top:511.2px;width:1043.0px;height:580.8px;background:#242428;border-radius:32px;"></div><svg style="left:927px;top:553px" width="20" height="20" viewBox="0 0 20 20" stroke="#f74dea" stroke-width="1.900" stroke-linecap="round"><path d="M1.700 7.700v4.600M5.900 2v16M10 6.500v6.500M14.200 4.800v10.400M18.100 8v4"/></svg><span class="t" style="left:958.0px;top:553.0px;font-size:21px;color:#f74dea;transform:scaleX(0.930);font-weight:700;">Vocals</span><span class="t" style="left:1032.0px;top:553.0px;font-size:21px;color:#fff;transform:scaleX(0.952);font-weight:700;">CollectionName</span><div class="b" style="left:1878.0px;top:538.0px;width:25.5px;height:25.5px;background:#323237;border-radius:13px;"></div><svg style="left:1885.750px;top:545.750px" width="10" height="10" viewBox="0 0 10 10" stroke="#9a9aa2" stroke-width="1.400" stroke-linecap="round"><path d="M1 1l8 8M9 1l-8 8"/></svg><div class="b" style="left:924.0px;top:603.0px;width:324.0px;height:458.5px;background:#000;"></div><span class="t" style="left:944.5px;top:616.2px;font-size:18px;color:#fff;transform:scaleX(0.950);font-weight:700;">Pitch Correction</span><div class="b" style="left:1167.5px;top:616.0px;width:71.5px;height:19.6px;background:#1f1f22;border-radius:5px;"></div><div class="b" style="left:1203.0px;top:616.0px;width:36.0px;height:19.6px;background:#48274d;border-radius:5px;"></div><span class="t" style="left:1172.5px;top:619.9px;font-size:11.5px;color:#8a8a90;transform:scaleX(0.957);-webkit-text-stroke:0.250px #8a8a90;">OFF</span><span class="t" style="left:1211.5px;top:619.9px;font-size:11.5px;color:#f74dea;transform:scaleX(0.986);-webkit-text-stroke:0.250px #f74dea;">ON</span><div class="b" style="left:939.2px;top:644.0px;width:92.0px;height:25.0px;background:#1c1c1f;border-radius:5.5px;"></div><span class="t" style="left:946.0px;top:651.2px;font-size:12px;color:#c8c8ce;transform:scaleX(0.973);font-weight:700;">Brightness</span><span class="t" style="left:1012.0px;top:651.2px;font-size:12px;color:#f74dea;transform:scaleX(1.010);-webkit-text-stroke:0.300px #f74dea;">99</span><div class="b" style="left:1036.2px;top:644.0px;width:92.0px;height:25.0px;background:#1c1c1f;border-radius:5.5px;"></div><span class="t" style="left:1043.0px;top:651.2px;font-size:12px;color:#c8c8ce;transform:scaleX(0.973);font-weight:700;">Brightness</span><span class="t" style="left:1109.0px;top:651.2px;font-size:12px;color:#f74dea;transform:scaleX(1.010);-webkit-text-stroke:0.300px #f74dea;">99</span><div class="b" style="left:1166.5px;top:649.0px;width:71.5px;height:20.0px;border-radius:4px;border:1px solid #55555c;"></div><span class="t" style="left:1188.0px;top:652.6px;font-size:11.5px;color:#9a9aa0;transform:scaleX(0.965);-webkit-text-stroke:0.250px #9a9aa0;">Reset</span><span class="t" style="left:944.5px;top:706.3px;font-size:11.5px;color:#7c7c84;transform:scaleX(1.015);">0</span><span class="t" style="left:1209.0px;top:706.3px;font-size:11.5px;color:#7c7c84;transform:scaleX(0.964);">100</span><span class="t" style="left:944.5px;top:967.5px;font-size:11.5px;color:#7c7c84;transform:scaleX(1.015);">0</span><span class="t" style="left:1209.0px;top:967.5px;font-size:11.5px;color:#7c7c84;transform:scaleX(0.964);">100</span><div class="b" style="left:944.5px;top:1009.5px;width:283.5px;height:41.0px;background:#1c1c1f;border-radius:9px;"></div><div class="b" style="left:1069.5px;top:1013.5px;width:33.5px;height:33.5px;background:#3a3a40;border-radius:9px;"></div><span class="t" style="left:1078.0px;top:1022.2px;font-size:14.5px;color:#dcdce0;transform:scaleX(1.022);font-weight:700;">50</span><span class="t" style="left:953.5px;top:1022.8px;font-size:11.5px;color:#66666e;transform:scaleX(1.015);">0</span><span class="t" style="left:1202.5px;top:1022.8px;font-size:11.5px;color:#66666e;transform:scaleX(0.964);">100</span><div class="b" style="left:1253.0px;top:603.0px;width:324.0px;height:458.5px;background:#000;"></div><span class="t" style="left:1273.5px;top:616.2px;font-size:18px;color:#fff;transform:scaleX(0.947);font-weight:700;">Distortion</span><div class="b" style="left:1496.5px;top:616.0px;width:71.5px;height:19.6px;background:#1f1f22;border-radius:5px;"></div><div class="b" style="left:1532.0px;top:616.0px;width:36.0px;height:19.6px;background:#48274d;border-radius:5px;"></div><span class="t" style="left:1501.5px;top:619.9px;font-size:11.5px;color:#8a8a90;transform:scaleX(0.957);-webkit-text-stroke:0.250px #8a8a90;">OFF</span><span class="t" style="left:1540.5px;top:619.9px;font-size:11.5px;color:#f74dea;transform:scaleX(0.986);-webkit-text-stroke:0.250px #f74dea;">ON</span><div class="b" style="left:1268.2px;top:644.0px;width:92.0px;height:25.0px;background:#1c1c1f;border-radius:5.5px;"></div><span class="t" style="left:1275.0px;top:651.2px;font-size:12px;color:#c8c8ce;transform:scaleX(0.973);font-weight:700;">Brightness</span><span class="t" style="left:1341.0px;top:651.2px;font-size:12px;color:#f74dea;transform:scaleX(1.010);-webkit-text-stroke:0.300px #f74dea;">99</span><div class="b" style="left:1365.2px;top:644.0px;width:92.0px;height:25.0px;background:#1c1c1f;border-radius:5.5px;"></div><span class="t" style="left:1372.0px;top:651.2px;font-size:12px;color:#c8c8ce;transform:scaleX(0.973);font-weight:700;">Brightness</span><span class="t" style="left:1438.0px;top:651.2px;font-size:12px;color:#f74dea;transform:scaleX(1.010);-webkit-text-stroke:0.300px #f74dea;">99</span><div class="b" style="left:1495.5px;top:649.0px;width:71.5px;height:20.0px;border-radius:4px;border:1px solid #55555c;"></div><span class="t" style="left:1517.0px;top:652.6px;font-size:11.5px;color:#9a9aa0;transform:scaleX(0.965);-webkit-text-stroke:0.250px #9a9aa0;">Reset</span><span class="t" style="left:1273.5px;top:706.3px;font-size:11.5px;color:#7c7c84;transform:scaleX(1.015);">0</span><span class="t" style="left:1538.0px;top:706.3px;font-size:11.5px;color:#7c7c84;transform:scaleX(0.964);">100</span><span class="t" style="left:1273.5px;top:967.5px;font-size:11.5px;color:#7c7c84;transform:scaleX(1.015);">0</span><span class="t" style="left:1538.0px;top:967.5px;font-size:11.5px;color:#7c7c84;transform:scaleX(0.964);">100</span><div class="b" style="left:1273.5px;top:1009.5px;width:283.5px;height:41.0px;background:#1c1c1f;border-radius:9px;"></div><div class="b" style="left:1398.5px;top:1013.5px;width:33.5px;height:33.5px;background:#3a3a40;border-radius:9px;"></div><span class="t" style="left:1407.0px;top:1022.2px;font-size:14.5px;color:#dcdce0;transform:scaleX(1.022);font-weight:700;">50</span><span class="t" style="left:1282.5px;top:1022.8px;font-size:11.5px;color:#66666e;transform:scaleX(1.015);">0</span><span class="t" style="left:1531.5px;top:1022.8px;font-size:11.5px;color:#66666e;transform:scaleX(0.964);">100</span><div class="b" style="left:1582.0px;top:603.0px;width:324.0px;height:458.5px;background:#000;"></div><span class="t" style="left:1602.5px;top:616.2px;font-size:18px;color:#fff;transform:scaleX(0.942);font-weight:700;">Reverb</span><div class="b" style="left:1825.5px;top:616.0px;width:71.5px;height:19.6px;background:#1f1f22;border-radius:5px;"></div><div class="b" style="left:1825.5px;top:616.0px;width:35.0px;height:19.6px;background:#48274d;border-radius:5px;"></div><span class="t" style="left:1830.5px;top:619.9px;font-size:11.5px;color:#f74dea;transform:scaleX(0.957);-webkit-text-stroke:0.250px #f74dea;">OFF</span><span class="t" style="left:1869.5px;top:619.9px;font-size:11.5px;color:#a0a0a6;transform:scaleX(0.986);-webkit-text-stroke:0.250px #a0a0a6;">ON</span><div class="b" style="left:1597.2px;top:644.0px;width:92.0px;height:25.0px;background:#1c1c1f;border-radius:5.5px;"></div><span class="t" style="left:1604.0px;top:651.2px;font-size:12px;color:#77777f;transform:scaleX(0.973);font-weight:700;">Brightness</span><span class="t" style="left:1670.0px;top:651.2px;font-size:12px;color:#8a8a92;transform:scaleX(1.010);-webkit-text-stroke:0.300px #8a8a92;">99</span><div class="b" style="left:1694.2px;top:644.0px;width:92.0px;height:25.0px;background:#1c1c1f;border-radius:5.5px;"></div><span class="t" style="left:1701.0px;top:651.2px;font-size:12px;color:#77777f;transform:scaleX(0.973);font-weight:700;">Brightness</span><span class="t" style="left:1767.0px;top:651.2px;font-size:12px;color:#8a8a92;transform:scaleX(1.010);-webkit-text-stroke:0.300px #8a8a92;">99</span><div class="b" style="left:1824.5px;top:649.0px;width:71.5px;height:20.0px;border-radius:4px;border:1px solid #55555c;"></div><span class="t" style="left:1846.0px;top:652.6px;font-size:11.5px;color:#9a9aa0;transform:scaleX(0.965);-webkit-text-stroke:0.250px #9a9aa0;">Reset</span><span class="t" style="left:1602.5px;top:706.3px;font-size:11.5px;color:#7c7c84;transform:scaleX(1.015);">0</span><span class="t" style="left:1867.0px;top:706.3px;font-size:11.5px;color:#7c7c84;transform:scaleX(0.964);">100</span><span class="t" style="left:1602.5px;top:967.5px;font-size:11.5px;color:#7c7c84;transform:scaleX(1.015);">0</span><span class="t" style="left:1867.0px;top:967.5px;font-size:11.5px;color:#7c7c84;transform:scaleX(0.964);">100</span><div class="b" style="left:1602.5px;top:1009.5px;width:283.5px;height:41.0px;background:#1c1c1f;border-radius:9px;"></div><div class="b" style="left:1727.5px;top:1013.5px;width:33.5px;height:33.5px;background:#3a3a40;border-radius:9px;"></div><span class="t" style="left:1736.0px;top:1022.2px;font-size:14.5px;color:#dcdce0;transform:scaleX(1.022);font-weight:700;">50</span><span class="t" style="left:1611.5px;top:1022.8px;font-size:11.5px;color:#66666e;transform:scaleX(1.015);">0</span><span class="t" style="left:1860.5px;top:1022.8px;font-size:11.5px;color:#66666e;transform:scaleX(0.964);">100</span><svg style="left:924px;top:603px" width="982" height="458" viewBox="924 603 982 458" fill="none"><defs><linearGradient id="rg" gradientUnits="userSpaceOnUse" x1="1660" y1="760" x2="1830" y2="930"><stop offset="0" stop-color="#1f1f21"/><stop offset="1" stop-color="#0a0a0b"/></linearGradient></defs><circle cx="1086.300" cy="846.700" r="82.800" stroke="#303034" stroke-width="13.300"/><circle cx="1086.300" cy="846.700" r="32" stroke="#303034" stroke-width="13"/><circle cx="1157.700" cy="775" r="39.400" stroke="#f74dea" stroke-opacity=".18" stroke-width="1"/><circle cx="1157.700" cy="775" r="27" stroke="#f74dea" stroke-opacity=".45" stroke-width="1.200"/><circle cx="1157.700" cy="775" r="19.500" stroke="#f74dea" stroke-opacity=".9" stroke-width="1.300"/><circle cx="1157.700" cy="775" r="10" fill="#f74dea"/><circle cx="1373.3" cy="805.4" r="32" stroke="#f74dea" stroke-width="12.700"/><circle cx="1456.1" cy="805.4" r="32" stroke="#f74dea" stroke-width="12.700"/><circle cx="1373.3" cy="885.9" r="32" stroke="#f74dea" stroke-width="12.700"/><circle cx="1456.1" cy="885.9" r="32" stroke="#f74dea" stroke-width="12.700"/><circle cx="1486.600" cy="774.800" r="10" fill="#6a6a72"/><ellipse cx="1706.3" cy="846.300" rx="47.200" ry="83.800" stroke="url(#rg)" stroke-width="13"/><ellipse cx="1744.3" cy="846.300" rx="47.200" ry="83.800" stroke="url(#rg)" stroke-width="13"/><ellipse cx="1781.0" cy="846.300" rx="47.200" ry="83.800" stroke="url(#rg)" stroke-width="13"/><circle cx="1815.500" cy="774.800" r="10" fill="#6a6a72"/></svg></div></body></html>
